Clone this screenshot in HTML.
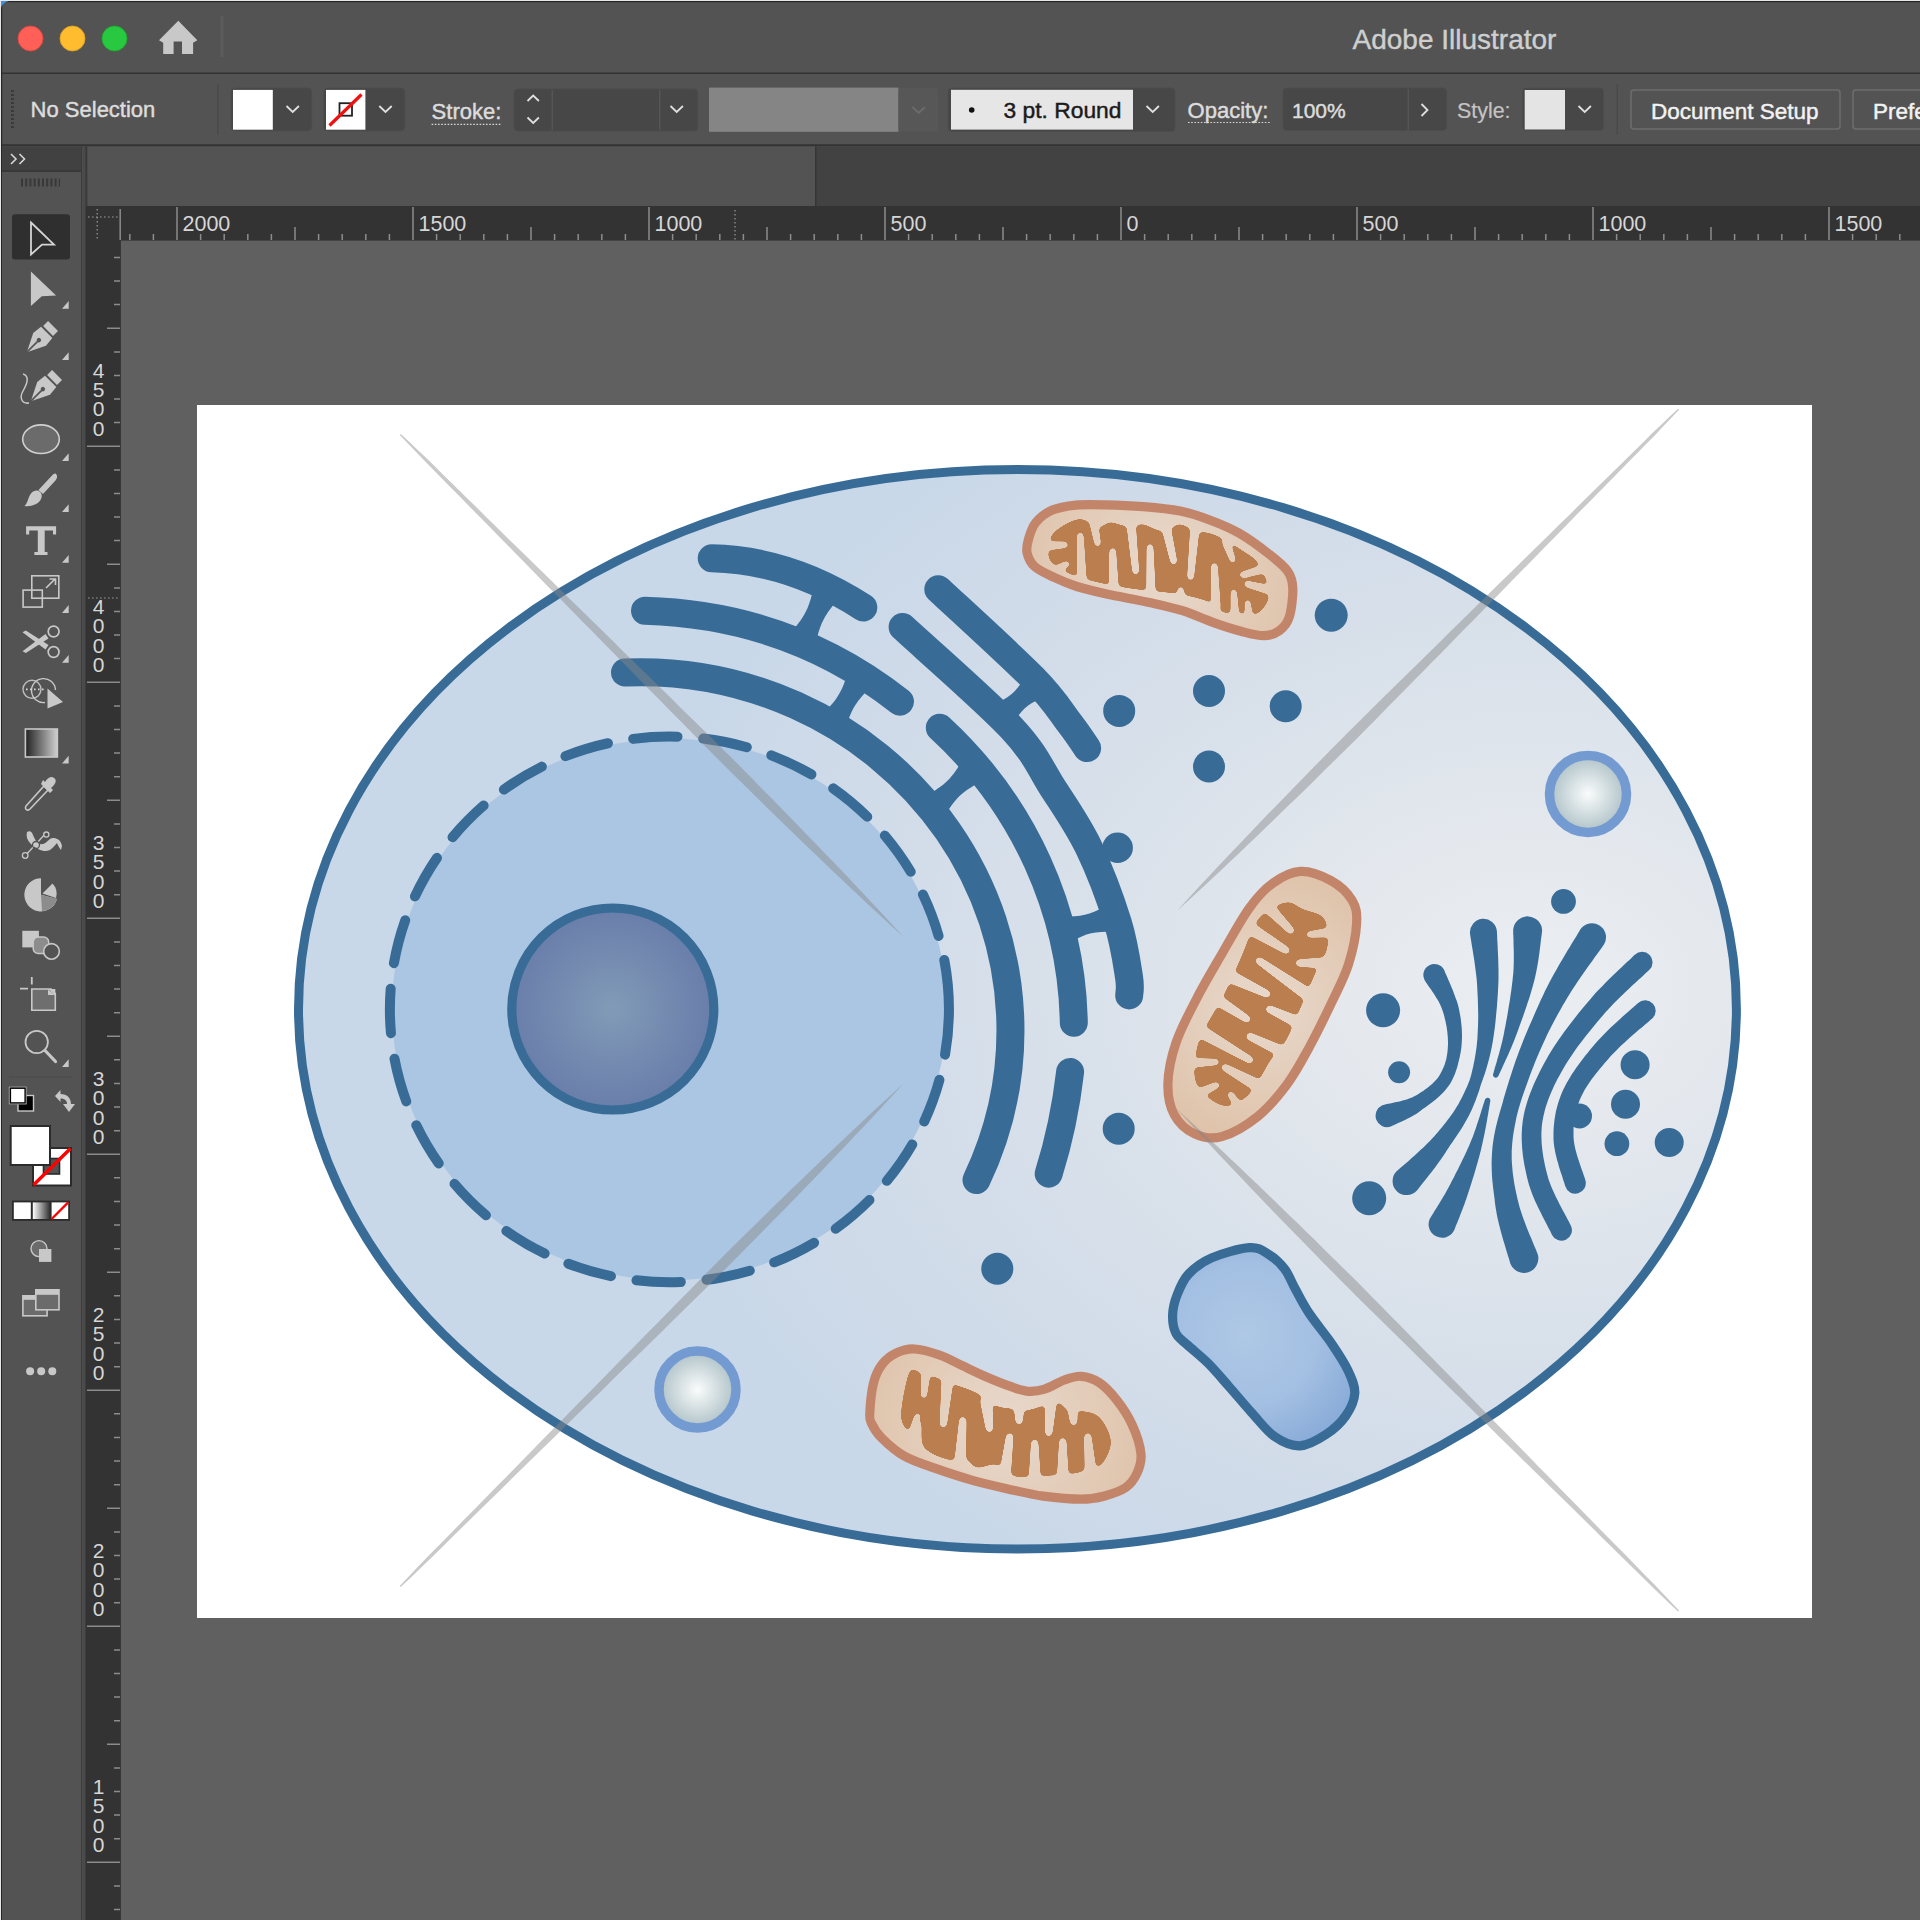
<!DOCTYPE html>
<html><head><meta charset="utf-8">
<style>
*{margin:0;padding:0}
html,body{width:1920px;height:1920px;overflow:hidden;background:#606060}
svg{position:absolute;left:0;top:0;display:block}
text{font-family:"Liberation Sans",sans-serif}
.ui{font-size:22px;fill:#dcdcdc;stroke:#dcdcdc;stroke-width:0.45px}
.dk{fill:#1a1a1a;stroke:#1a1a1a;font-size:22.8px}
.lt{fill:#c4c4c4;stroke:#c4c4c4;stroke-width:0.2px;font-size:21.4px}
.wt{fill:#f2f2f2;stroke:#f2f2f2}
.ttl{font-size:28px;fill:#cfcfcf;stroke:#cfcfcf;stroke-width:0.4px}
.rl{font-size:21.5px;fill:#d6d6d6}
.rv{font-size:21px;fill:#d6d6d6;text-anchor:middle}
</style></head><body>
<svg width="1920" height="1920" viewBox="0 0 1920 1920">
<!-- window backgrounds -->
<rect x="0" y="0" width="1920" height="1920" fill="#606060"/>
<rect x="0" y="0" width="1920" height="146" fill="#535353"/>
<rect x="0" y="0" width="1920" height="1.5" fill="#e6e6e6"/>
<rect x="0" y="0" width="1.5" height="1920" fill="#e6e6e6"/>
<rect x="1" y="1" width="1919" height="1.2" fill="#262626"/>
<rect x="1" y="1" width="1.2" height="1919" fill="#262626"/>
<path d="M1,1 H9 Q2.5,2.5 1,8 Z" fill="#3d8fe8"/>
<rect x="2" y="72.5" width="1918" height="1.5" fill="#333"/>
<rect x="2" y="144.3" width="1918" height="2.2" fill="#333"/>
<!-- traffic lights -->
<circle cx="30.5" cy="38.5" r="12.5" fill="#fe5f57" stroke="#e0443e" stroke-width="0.8"/>
<circle cx="72.5" cy="38.5" r="12.5" fill="#febc2e" stroke="#dea123" stroke-width="0.8"/>
<circle cx="114.5" cy="38.5" r="12.5" fill="#28c840" stroke="#1aab29" stroke-width="0.8"/>
<!-- home -->
<path d="M178.3,20.7 L197.3,40.2 L193.1,42.8 V54 H182 V41.5 H173.6 V54 H163.2 V42.8 L159,40.2 Z" fill="#c8c8c8"/>
<rect x="220.5" y="16" width="3" height="41" fill="#5c5c5c"/>
<text x="1352.5" y="48.5" class="ttl">Adobe Illustrator</text>
<!-- control bar -->
<path d="M12.5,90V130" stroke="#3a3a3a" stroke-width="3" stroke-dasharray="2,2"/>
<text x="30.6" y="116.6" class="ui">No Selection</text>
<rect x="217" y="84" width="1.5" height="51" fill="#4a4a4a"/>
<rect x="231.2" y="88.1" width="80.5" height="42.7" rx="4" fill="#474747" stroke="#4c4c4c" stroke-width="1"/>
<rect x="233" y="89.9" width="39.8" height="39.8" fill="#ffffff"/>
<path d="M286.5,106 L292.7,112 L298.9,106" stroke="#e0e0e0" stroke-width="1.8" fill="none"/>
<rect x="323.8" y="88.1" width="80.9" height="42.7" rx="4" fill="#474747" stroke="#4c4c4c" stroke-width="1"/>
<rect x="326" y="89.9" width="39.4" height="39.8" fill="#ffffff"/>
<rect x="339.5" y="103.2" width="12.5" height="12.5" fill="none" stroke="#222" stroke-width="1.8"/>
<path d="M329.5,125.5 L361.5,94.5" stroke="#f01010" stroke-width="3.2"/>
<path d="M379.3,106 L385.5,112 L391.7,106" stroke="#e0e0e0" stroke-width="1.8" fill="none"/>
<text x="431.6" y="119.3" class="ui">Stroke:</text>
<path d="M431.6,124.3H501" stroke="#d8d8d8" stroke-width="1.2" stroke-dasharray="1.6,1.6"/>
<rect x="514" y="89" width="183.8" height="42" rx="4" fill="#474747" stroke="#4c4c4c" stroke-width="1"/>
<rect x="551.5" y="90" width="1.5" height="40" fill="#555"/>
<rect x="659" y="90" width="1.5" height="40" fill="#555"/>
<path d="M527.5,101 L533.2,95.5 L538.9,101 M527.5,117.5 L533.2,123 L538.9,117.5" stroke="#e0e0e0" stroke-width="1.8" fill="none"/>
<path d="M670.5,106 L676.7,112 L682.9,106" stroke="#e0e0e0" stroke-width="1.8" fill="none"/>
<rect x="709" y="87.6" width="189.5" height="44.2" fill="#858585"/>
<rect x="898.5" y="87.6" width="39.5" height="44.2" rx="3" fill="#575757"/>
<path d="M912.5,107 L918.7,113 L924.9,107" stroke="#6c6c6c" stroke-width="1.8" fill="none"/>
<rect x="948" y="88" width="227" height="43.5" rx="4" fill="#474747" stroke="#4c4c4c" stroke-width="1"/>
<rect x="951" y="89.8" width="182" height="39.8" fill="#e6e6e6"/>
<circle cx="971.7" cy="110" r="2.8" fill="#111"/>
<text x="1003.6" y="118.2" class="ui dk">3 pt. Round</text>
<path d="M1146.5,106 L1152.7,112 L1158.9,106" stroke="#e0e0e0" stroke-width="1.8" fill="none"/>
<text x="1187.6" y="117.7" class="ui">Opacity:</text>
<path d="M1188,122.5H1270" stroke="#d8d8d8" stroke-width="1.2" stroke-dasharray="1.6,1.6"/>
<rect x="1283" y="88" width="163.6" height="42.5" rx="4" fill="#474747" stroke="#4c4c4c" stroke-width="1"/>
<rect x="1407.5" y="89" width="1.5" height="41" fill="#555"/>
<path d="M1421.5,104 L1427.5,110 L1421.5,116" stroke="#e0e0e0" stroke-width="1.8" fill="none"/>
<text x="1292" y="117.7" class="ui" style="font-size:21px">100%</text>
<text x="1457" y="118" class="ui lt">Style:</text>
<rect x="1522.5" y="88" width="81" height="42.5" rx="4" fill="#474747" stroke="#4c4c4c" stroke-width="1"/>
<rect x="1524.7" y="90" width="40.3" height="39.5" fill="#e4e4e4"/>
<path d="M1578.5,106 L1584.7,112 L1590.9,106" stroke="#e0e0e0" stroke-width="1.8" fill="none"/>
<rect x="1616.5" y="84" width="1.5" height="51" fill="#4a4a4a"/>
<rect x="1631" y="90" width="209" height="39" rx="3" fill="#535353" stroke="#6e6e6e" stroke-width="1.5"/>
<text x="1651" y="118.8" class="ui wt" style="font-size:22.5px">Document Setup</text>
<rect x="1853" y="90" width="80" height="39" rx="3" fill="#535353" stroke="#6e6e6e" stroke-width="1.5"/>
<text x="1873" y="118.8" class="ui wt" style="font-size:22.5px">Prefe</text>
<!-- tab strip -->
<rect x="85" y="146.5" width="1835" height="59.5" fill="#424242"/>
<rect x="87.5" y="146.5" width="727.5" height="59.5" fill="#535353"/>
<rect x="815" y="146.5" width="1.5" height="59.5" fill="#353535"/>
<!-- rulers -->
<rect x="85" y="206" width="1835" height="34.6" fill="#333333"/>
<rect x="85" y="206" width="35.9" height="1714" fill="#333333"/>
<path d="M97.2,209V240" stroke="#9a9a9a" stroke-width="1.2" stroke-dasharray="1.6,2.4"/>
<path d="M88,217H120" stroke="#9a9a9a" stroke-width="1.2" stroke-dasharray="1.6,2.4"/>
<path d="M120.2,209V240" stroke="#8c8c8c" stroke-width="1.5"/>
<path d="M735,210V240" stroke="#9a9a9a" stroke-width="1.2" stroke-dasharray="1.6,2.4"/>
<path d="M88,598H118" stroke="#9a9a9a" stroke-width="1.2" stroke-dasharray="1.6,2.4"/>

<path d="M129.8,234V240M153.4,234V240M177.0,207V240M200.6,234V240M224.2,234V240M247.8,234V240M271.4,234V240M295.0,227V240M318.6,234V240M342.2,234V240M365.8,234V240M389.4,234V240M413.0,207V240M436.6,234V240M460.2,234V240M483.8,234V240M507.4,234V240M531.0,227V240M554.6,234V240M578.2,234V240M601.8,234V240M625.4,234V240M649.0,207V240M672.6,234V240M696.2,234V240M719.8,234V240M743.4,234V240M767.0,227V240M790.6,234V240M814.2,234V240M837.8,234V240M861.4,234V240M885.0,207V240M908.6,234V240M932.2,234V240M955.8,234V240M979.4,234V240M1003.0,227V240M1026.6,234V240M1050.2,234V240M1073.8,234V240M1097.4,234V240M1121.0,207V240M1144.6,234V240M1168.2,234V240M1191.8,234V240M1215.4,234V240M1239.0,227V240M1262.6,234V240M1286.2,234V240M1309.8,234V240M1333.4,234V240M1357.0,207V240M1380.6,234V240M1404.2,234V240M1427.8,234V240M1451.4,234V240M1475.0,227V240M1498.6,234V240M1522.2,234V240M1545.8,234V240M1569.4,234V240M1593.0,207V240M1616.6,234V240M1640.2,234V240M1663.8,234V240M1687.4,234V240M1711.0,227V240M1734.6,234V240M1758.2,234V240M1781.8,234V240M1805.4,234V240M1829.0,207V240M1852.6,234V240M1876.2,234V240M1899.8,234V240M1923.4,234V240" stroke="#8c8c8c" stroke-width="1.5"/>
<text x="182.5" y="231" class="rl">2000</text>
<text x="418.5" y="231" class="rl">1500</text>
<text x="654.5" y="231" class="rl">1000</text>
<text x="890.5" y="231" class="rl">500</text>
<text x="1126.5" y="231" class="rl">0</text>
<text x="1362.5" y="231" class="rl">500</text>
<text x="1598.5" y="231" class="rl">1000</text>
<text x="1834.5" y="231" class="rl">1500</text>
<path d="M114,257.4H120M114,281.0H120M114,304.6H120M107,328.2H120M114,351.9H120M114,375.4H120M114,399.1H120M114,422.6H120M87,446.2H120M114,469.9H120M114,493.4H120M114,517.0H120M114,540.6H120M107,564.2H120M114,587.9H120M114,611.5H120M114,635.0H120M114,658.6H120M87,682.2H120M114,705.9H120M114,729.5H120M114,753.0H120M114,776.7H120M107,800.2H120M114,823.9H120M114,847.5H120M114,871.0H120M114,894.7H120M87,918.2H120M114,941.9H120M114,965.5H120M114,989.1H120M114,1012.7H120M107,1036.2H120M114,1059.8H120M114,1083.5H120M114,1107.1H120M114,1130.7H120M87,1154.2H120M114,1177.8H120M114,1201.5H120M114,1225.1H120M114,1248.7H120M107,1272.2H120M114,1295.8H120M114,1319.5H120M114,1343.1H120M114,1366.7H120M87,1390.2H120M114,1413.8H120M114,1437.5H120M114,1461.1H120M114,1484.7H120M107,1508.2H120M114,1531.9H120M114,1555.5H120M114,1579.1H120M114,1602.7H120M87,1626.2H120M114,1649.9H120M114,1673.5H120M114,1697.1H120M114,1720.7H120M107,1744.2H120M114,1767.9H120M114,1791.5H120M114,1815.1H120M114,1838.7H120M87,1862.2H120M114,1885.9H120M114,1909.5H120" stroke="#8c8c8c" stroke-width="1.5"/>
<text x="98.5" y="378.2" class="rv">4</text>
<text x="98.5" y="397.4" class="rv">5</text>
<text x="98.5" y="416.4" class="rv">0</text>
<text x="98.5" y="435.6" class="rv">0</text>
<text x="98.5" y="614.2" class="rv">4</text>
<text x="98.5" y="633.4" class="rv">0</text>
<text x="98.5" y="652.5" class="rv">0</text>
<text x="98.5" y="671.5" class="rv">0</text>
<text x="98.5" y="850.2" class="rv">3</text>
<text x="98.5" y="869.4" class="rv">5</text>
<text x="98.5" y="888.5" class="rv">0</text>
<text x="98.5" y="907.5" class="rv">0</text>
<text x="98.5" y="1086.2" class="rv">3</text>
<text x="98.5" y="1105.3" class="rv">0</text>
<text x="98.5" y="1124.5" class="rv">0</text>
<text x="98.5" y="1143.5" class="rv">0</text>
<text x="98.5" y="1322.2" class="rv">2</text>
<text x="98.5" y="1341.3" class="rv">5</text>
<text x="98.5" y="1360.5" class="rv">0</text>
<text x="98.5" y="1379.5" class="rv">0</text>
<text x="98.5" y="1558.2" class="rv">2</text>
<text x="98.5" y="1577.3" class="rv">0</text>
<text x="98.5" y="1596.5" class="rv">0</text>
<text x="98.5" y="1615.5" class="rv">0</text>
<text x="98.5" y="1794.2" class="rv">1</text>
<text x="98.5" y="1813.3" class="rv">5</text>
<text x="98.5" y="1832.5" class="rv">0</text>
<text x="98.5" y="1851.5" class="rv">0</text>
<!-- toolbar panel -->
<rect x="2" y="146.5" width="80" height="1774" fill="#535353"/>
<rect x="2" y="146.5" width="80" height="23.5" fill="#414141"/>
<rect x="2" y="170" width="80" height="2" fill="#393939"/>
<rect x="81" y="146.5" width="1.5" height="1774" fill="#3c3c3c"/>
<rect x="82.5" y="146.5" width="3" height="1774" fill="#4a4a4a"/>
<rect x="85.5" y="146.5" width="1.5" height="60" fill="#3a3a3a"/>
<path d="M11,154 L16,159 L11,164 M19.5,154 L24.5,159 L19.5,164" stroke="#d6d6d6" stroke-width="1.6" fill="none"/>
<path d="M21,182.5H60" stroke="#383838" stroke-width="8" stroke-dasharray="2,2.2"/>
<!-- selection tool -->
<rect x="12" y="214.3" width="58" height="45.3" rx="3" fill="#2f2f2f"/>
<path d="M31,222.5 L54,244.7 L42,244.7 L31,254.5 Z" fill="none" stroke="#d4d4d4" stroke-width="1.8" stroke-linejoin="miter"/>
<!-- direct selection -->
<path d="M30.9,271.6 L56.1,295.6 L41.8,296.3 L30.9,306 Z" fill="#c8c8c8"/>
<g fill="#c8c8c8">
<path d="M62,308.8 L68.7,301 V308.8 Z"/>
<path d="M62,360 L68.7,352.2 V360 Z"/>
<path d="M62,461 L68.7,453.2 V461 Z"/>
<path d="M62,512 L68.7,504.2 V512 Z"/>
<path d="M62,562.7 L68.7,554.9 V562.7 Z"/>
<path d="M62,612.9 L68.7,605.1 V612.9 Z"/>
<path d="M62,662.8 L68.7,655 V662.8 Z"/>
<path d="M62,763.5 L68.7,755.7 V763.5 Z"/>
<path d="M62,1067 L68.7,1059.2 V1067 Z"/>
</g>
<!-- pen -->
<g transform="translate(41,338) rotate(45)">
<path d="M-8,-8 L8,-8 L9,2 L0,20 L-9,2 Z" fill="#c8c8c8"/>
<rect x="-7" y="-17" width="14" height="7" fill="#c8c8c8"/>
<path d="M0,20 V4" stroke="#535353" stroke-width="1.6"/>
<circle cx="0" cy="3" r="2.2" fill="#535353"/>
</g>
<!-- curvature pen -->
<g transform="translate(45,387) rotate(45)">
<path d="M-8,-8 L8,-8 L9,2 L0,20 L-9,2 Z" fill="#c8c8c8"/>
<rect x="-7" y="-17" width="14" height="7" fill="#c8c8c8"/>
<path d="M0,20 V4" stroke="#535353" stroke-width="1.6"/>
<circle cx="0" cy="3" r="2.2" fill="#535353"/>
</g>
<path d="M23,374 C30,376 27,384 23,391 C19,398 22,404 29,403" fill="none" stroke="#c8c8c8" stroke-width="1.5"/>
<!-- ellipse -->
<ellipse cx="41" cy="439.2" rx="18.3" ry="14.3" fill="#6b6b6b" stroke="#d0d0d0" stroke-width="1.6"/>
<!-- paintbrush -->
<path d="M56,474 C58,476 57,479 55,481 L43,494 L38.5,490 L52,475.5 C53.5,474 55,473 56,474 Z" fill="#c8c8c8"/>
<path d="M37,490.5 C41,491 43,495 41,499 C39,504 31,507 24.5,506 C28,503 28,497 31,493.5 C33,491 35,490.3 37,490.5 Z" fill="#c8c8c8"/>
<!-- type -->
<path d="M26.1,526.3 H56.1 V534.5 H53 V530.5 H44.7 V552 H47.5 V555 H34.4 V552 H37.8 V530.5 H29.2 V534.5 H26.1 Z" fill="#c8c8c8"/>
<!-- scale -->
<rect x="31.8" y="575.8" width="27" height="22.4" fill="none" stroke="#c8c8c8" stroke-width="1.6"/>
<rect x="23.1" y="590.1" width="19.2" height="17" fill="none" stroke="#c8c8c8" stroke-width="1.6"/>
<path d="M46,588 L55,579 M49.5,579 H55.5 V585" stroke="#c8c8c8" stroke-width="1.6" fill="none"/>
<!-- scissors -->
<path d="M22.5,632.2 L25.8,630.6 L48.5,645 L45.5,649.5 Z" fill="#c8c8c8"/><path d="M22.5,651.3 L25.8,652.9 L48.5,638.5 L45.5,634 Z" fill="#c8c8c8"/>
<circle cx="53.6" cy="631.5" r="5.4" fill="none" stroke="#c8c8c8" stroke-width="1.7"/>
<circle cx="53.6" cy="652" r="5.4" fill="none" stroke="#c8c8c8" stroke-width="1.7"/>
<!-- shape builder -->
<circle cx="32" cy="689.3" r="9" fill="none" stroke="#bdbdbd" stroke-width="1.4"/>
<path d="M45,702.5 A12,12 0 1 1 55.5,690" fill="none" stroke="#c8c8c8" stroke-width="1.4"/>
<path d="M26,689.3 H46" stroke="#d8d8d8" stroke-width="1.8" stroke-dasharray="1.6,2.4"/>
<path d="M47.5,688.5 L63,702 L47.5,708.5 Z" fill="#c8c8c8"/>
<!-- gradient -->
<defs><linearGradient id="gtool" x1="0" x2="1"><stop offset="0" stop-color="#222"/><stop offset="1" stop-color="#d0d0d0"/></linearGradient>
<linearGradient id="gmode" x1="0" x2="1"><stop offset="0" stop-color="#fff"/><stop offset="1" stop-color="#333"/></linearGradient></defs>
<rect x="25.4" y="729" width="32" height="28" fill="url(#gtool)" stroke="#c8c8c8" stroke-width="1.6"/>
<!-- eyedropper -->
<path d="M26,806 L44,786 L48,790 L30,809 C28,811 24,810 26,806 Z" fill="none" stroke="#c8c8c8" stroke-width="1.6"/>
<path d="M41,784 L50,793 L53,790 L51,788 C56,784 57,780 54,778 C52,776 48,777 45,782 L43,780 Z" fill="#c8c8c8"/>
<!-- puppet warp -->
<path d="M27,832 C26,836 27,840 30,843 C33,846 38,850 44,851 C51,852 54,846 57,843 C58,845 59,848 61,850 L62,846 C61,840 57,838 53,838 C49,838 47,843 43,844 C38,845 35,840 33,835 C32,832 30,830 27,832 Z" fill="#c8c8c8"/>
<path d="M25,856 L46,833" stroke="#c8c8c8" stroke-width="1.3"/>
<circle cx="25.2" cy="855.5" r="2.8" fill="#535353" stroke="#c8c8c8" stroke-width="1.3"/>
<circle cx="46.3" cy="834.6" r="2.6" fill="#535353" stroke="#c8c8c8" stroke-width="1.3"/>
<circle cx="36" cy="845" r="3.5" fill="none" stroke="#535353" stroke-width="1.3"/>
<!-- pie -->
<path d="M41,878.2 A16.6,16.6 0 1 0 57,899 L41,894.7 Z" fill="#c8c8c8"/>
<path d="M41,894.7 L57,899 A16.6,16.6 0 0 1 42,911.3 Z" fill="#8c8c8c"/>
<path d="M42.5,893.5 L52.5,883.5 A15,15 0 0 1 56,898 Z" fill="#c8c8c8"/>
<!-- live paint -->
<rect x="22.3" y="930.8" width="16.6" height="16.6" fill="#c8c8c8"/>
<rect x="33.2" y="937" width="15.5" height="16.5" rx="5" fill="#8c8c8c" stroke="#c8c8c8" stroke-width="1.5"/>
<circle cx="51.5" cy="951.4" r="7.8" fill="#535353" stroke="#c8c8c8" stroke-width="1.6"/>
<!-- artboard -->
<path d="M31.8,977V984.6 M20,988.6H28" stroke="#c8c8c8" stroke-width="1.8"/>
<path d="M31.8,989 H51 L55.3,993.5 V1010.2 H31.8 Z" fill="#6e6e6e" stroke="#c8c8c8" stroke-width="1.6"/>
<path d="M48,989.5 V995 H55" fill="#c8c8c8"/>
<path d="M48.5,989 L55.3,995.8 V989 Z" fill="#c8c8c8"/>
<!-- zoom -->
<circle cx="36.7" cy="1042" r="11.2" fill="none" stroke="#c8c8c8" stroke-width="1.8"/>
<path d="M45,1050.5 L55.5,1061.5" stroke="#c8c8c8" stroke-width="3.2" stroke-linecap="round"/>
<rect x="9" y="1076.5" width="64" height="1" fill="#4b4b4b"/>
<!-- default colors -->
<rect x="18" y="1095.5" width="15.5" height="15.5" fill="#000" stroke="#c8c8c8" stroke-width="1.4"/>
<rect x="10" y="1087.8" width="15.5" height="15.5" fill="#fff" stroke="#000" stroke-width="2.2"/>
<rect x="9.2" y="1087" width="17" height="17" fill="none" stroke="#c8c8c8" stroke-width="0.8"/>
<!-- swap arrow -->
<path d="M55,1096 L60.5,1090 V1094 C67,1094 71,1098 71,1104 H75 L69,1112 L63,1104 H67 C67,1100 64,1098.5 60.5,1098.5 V1102 Z" fill="#c8c8c8"/>
<!-- fill / stroke big swatches -->
<rect x="32" y="1147" width="40" height="39.5" fill="#2b2b2b"/>
<rect x="34" y="1149" width="36" height="35.5" fill="#fff"/>
<rect x="43.5" y="1158.5" width="16" height="15.5" fill="#535353" stroke="#2b2b2b" stroke-width="1.6"/>
<path d="M33.5,1185 L70.5,1148.5" stroke="#ff0000" stroke-width="3.4"/>
<rect x="9.7" y="1125" width="41.3" height="41" fill="#2b2b2b"/>
<rect x="11.7" y="1127" width="37.3" height="37" fill="#fff"/>
<!-- mode row -->
<rect x="12" y="1200.6" width="58" height="20.2" fill="#2b2b2b"/>
<rect x="13.8" y="1202.4" width="17" height="16.6" fill="#fff"/>
<rect x="32.8" y="1202.4" width="17" height="16.6" fill="url(#gmode)"/>
<rect x="51.6" y="1202.4" width="16.6" height="16.6" fill="#fff"/>
<path d="M51.6,1219 L68.2,1202.4" stroke="#ff0000" stroke-width="2.4"/>
<!-- draw mode -->
<circle cx="39" cy="1248.6" r="8" fill="#6b6b6b" stroke="#c8c8c8" stroke-width="1.4"/>
<rect x="39" y="1249" width="12.4" height="12.9" fill="#c8c8c8"/>
<!-- screen mode -->
<rect x="22.9" y="1295.8" width="24.2" height="20" fill="#6b6b6b" stroke="#c8c8c8" stroke-width="1.6"/>
<rect x="22.9" y="1295.8" width="24.2" height="4" fill="#c8c8c8"/>
<rect x="35.8" y="1289.8" width="23.2" height="20" fill="#6b6b6b" stroke="#c8c8c8" stroke-width="1.6"/>
<rect x="35.8" y="1289.8" width="23.2" height="5" fill="#c8c8c8"/>
<circle cx="30.1" cy="1371.3" r="4" fill="#c8c8c8"/>
<circle cx="41.2" cy="1371.3" r="4" fill="#c8c8c8"/>
<circle cx="52.3" cy="1371.3" r="4" fill="#c8c8c8"/>

<rect x="197" y="405" width="1615" height="1213" fill="#ffffff"/>
<defs>
<radialGradient id="gcell" gradientUnits="userSpaceOnUse" cx="1532" cy="990" r="900" gradientTransform="translate(1532,990) scale(1,0.755) translate(-1532,-990)">
<stop offset="0" stop-color="#ebeef1"/><stop offset="0.2" stop-color="#e5e9ee"/><stop offset="0.5" stop-color="#d9e1ea"/><stop offset="0.8" stop-color="#d0dbe9"/><stop offset="1" stop-color="#c9d8e8"/></radialGradient>
<radialGradient id="gnucleolus" gradientUnits="userSpaceOnUse" cx="612" cy="1009" r="102">
<stop offset="0" stop-color="#819bb7"/><stop offset="1" stop-color="#697daa"/></radialGradient>
<radialGradient id="gvac" gradientUnits="userSpaceOnUse" cx="1246" cy="1335" r="120">
<stop offset="0" stop-color="#aec8e5"/><stop offset="0.6" stop-color="#a3bfe2"/><stop offset="1" stop-color="#8badd9"/></radialGradient>
<radialGradient id="gves1" gradientUnits="userSpaceOnUse" cx="1588" cy="794" r="36">
<stop offset="0" stop-color="#fafcfc"/><stop offset="1" stop-color="#b3c5ca"/></radialGradient>
<radialGradient id="gves2" gradientUnits="userSpaceOnUse" cx="697.5" cy="1389.5" r="36">
<stop offset="0" stop-color="#fafcfc"/><stop offset="1" stop-color="#b3c5ca"/></radialGradient>
<radialGradient id="gmito1" gradientUnits="userSpaceOnUse" cx="1160" cy="570" r="150">
<stop offset="0" stop-color="#e8d9cd"/><stop offset="1" stop-color="#dfc3aa"/></radialGradient>
<radialGradient id="gmito2" gradientUnits="userSpaceOnUse" cx="1262" cy="1005" r="140">
<stop offset="0" stop-color="#e8d9cd"/><stop offset="1" stop-color="#dfc3aa"/></radialGradient>
<radialGradient id="gmito3" gradientUnits="userSpaceOnUse" cx="1005" cy="1425" r="150">
<stop offset="0" stop-color="#e8d9cd"/><stop offset="1" stop-color="#dfc3aa"/></radialGradient>
</defs>
<ellipse cx="1017.45" cy="1009.25" rx="718.95" ry="539.75" fill="url(#gcell)" stroke="#386c97" stroke-width="9"/>
<ellipse cx="669.4" cy="1009.4" rx="277.5" ry="270.8" fill="#abc6e2"/>
<path d="M944.3,960A279.5,272.8 0 0 1 394.5,1058.8A279.5,272.8 0 0 1 944.3,960" fill="none" stroke="#386c97" stroke-width="10" stroke-linecap="round" stroke-dasharray="95.2,25.8,44.4,25.8,44.4,25.8,44.4,25.8,44.4,25.8,44.4,25.8,44.4,25.8,44.4,25.8,44.4,25.8,44.4,25.8,44.4,25.8,44.4,25.8,44.4,25.8,44.4,25.8,44.4,25.8,44.4,25.8,44.4,25.8,44.4,25.8,44.4,25.8,44.4,25.8,44.4,25.8,44.4,25.8,44.4,25.8,44.4,25.8"/>
<circle cx="612.8" cy="1009" r="101" fill="url(#gnucleolus)" stroke="#386c97" stroke-width="9.2"/>
<path d="M711.7,558.3 Q790,560 863.3,607.5" fill="none" stroke="#386c97" stroke-width="28" stroke-linecap="round"/>
<path d="M645,610.8 Q790,615 900,701.7" fill="none" stroke="#386c97" stroke-width="28" stroke-linecap="round"/>
<path d="M625,672.5 A370,358 0 0 1 976.5,1180" fill="none" stroke="#386c97" stroke-width="28" stroke-linecap="round"/>
<path d="M939.8,727.7 A434,418 0 0 1 1073.8,1022.7" fill="none" stroke="#386c97" stroke-width="28" stroke-linecap="round"/>
<path d="M902.6,627.1C920.7,643.9 986.1,700.7 1011.3,727.7C1036.5,754.7 1040.5,769 1053.5,789C1066.5,809 1078.3,825.8 1089,848C1099.7,870.2 1110.9,900.5 1117.6,922C1124.3,943.5 1127.1,964.8 1129,977C1130.9,989.2 1129.2,992.3 1129.2,995.4" fill="none" stroke="#386c97" stroke-width="28" stroke-linecap="round"/>
<path d="M938.3,589.2C954.1,604 1011.2,655.8 1033.1,678.1C1055,700.5 1060.6,711.6 1069.6,723.3C1078.6,735 1084.2,744 1087.1,748.1" fill="none" stroke="#386c97" stroke-width="28" stroke-linecap="round"/>
<path d="M1070.1,1072 Q1064,1125 1048.7,1173.6" fill="none" stroke="#386c97" stroke-width="28" stroke-linecap="round"/>
<path d="M814.5,582.4C809.6,608 805.3,616.6 787.9,635.9L814.7,649.3C819.6,623.7 823.9,615.1 841.3,595.8Z" fill="#386c97"/>
<path d="M849,668.1C842.2,692.6 837.3,700.6 818.6,717.8L844.2,733.4C851,708.9 855.9,700.9 874.6,683.7Z" fill="#386c97"/>
<path d="M963.6,758.3C951,779.9 944.3,786.2 922.1,797.6L942.7,819.4C955.3,797.8 962,791.5 984.2,780.1Z" fill="#386c97"/>
<path d="M1026.8,673.4C1016.3,692.2 1010.5,697.4 990.6,705.8L1010.6,728.2C1021.1,709.4 1026.9,704.2 1046.8,695.8Z" fill="#386c97"/>
<path d="M1110.4,903C1090.2,915.3 1081.9,917.4 1058.4,916L1065.6,945.2C1085.8,932.9 1094.1,930.8 1117.6,932.2Z" fill="#386c97"/>
<circle cx="1117.6" cy="847.8" r="15.3" fill="#386c97"/>
<circle cx="1119.2" cy="710.9" r="16" fill="#386c97"/>
<circle cx="1118.7" cy="1128.8" r="16" fill="#386c97"/>
<circle cx="1331.2" cy="615.2" r="16.5" fill="#386c97"/>
<circle cx="1209" cy="691" r="16" fill="#386c97"/>
<circle cx="1285.7" cy="706.2" r="16" fill="#386c97"/>
<circle cx="1209" cy="766.5" r="16" fill="#386c97"/>
<circle cx="997.3" cy="1268.8" r="16" fill="#386c97"/>
<path d="M1172.6,1315.2C1172.8,1308.7 1174.5,1301.4 1177.2,1294.6C1179.9,1287.7 1182.9,1280.1 1188.6,1274C1194.4,1267.8 1201.4,1262.3 1211.6,1257.9C1221.7,1253.5 1239.8,1248.2 1249.4,1247.6C1258.9,1247 1262.9,1250.8 1268.8,1254.5C1274.8,1258.1 1280.5,1263.6 1284.9,1269.4C1289.3,1275.1 1291.2,1281.6 1295.2,1288.8C1299.2,1296.1 1302.8,1303.7 1308.9,1312.9C1315,1322.1 1325.3,1334.3 1331.8,1343.8C1338.3,1353.4 1344.1,1362 1347.9,1370.2C1351.7,1378.4 1355.1,1385.5 1354.8,1393.1C1354.4,1400.7 1350.4,1409.1 1345.6,1416C1340.8,1422.9 1333.8,1429.4 1326.1,1434.3C1318.5,1439.3 1308.4,1445.4 1299.8,1445.8C1291.2,1446.2 1282.6,1442.2 1274.6,1436.6C1266.5,1431.1 1259.3,1421 1251.6,1412.6C1244,1404.2 1236,1394.4 1228.7,1386.2C1221.5,1378 1215,1370.2 1208.1,1363.3C1201.2,1356.4 1192.8,1349.9 1187.5,1345C1182.1,1340 1178.5,1338.5 1176,1333.5C1173.6,1328.6 1172.4,1321.7 1172.6,1315.2Z" fill="url(#gvac)" stroke="#386c97" stroke-width="9.2"/>
<circle cx="1588" cy="794" r="38.5" fill="url(#gves1)" stroke="#739bd2" stroke-width="9.5"/>
<circle cx="697.5" cy="1389.5" r="38.5" fill="url(#gves2)" stroke="#739bd2" stroke-width="9.5"/>
<filter id="goo" x="-20%" y="-20%" width="140%" height="140%" color-interpolation-filters="sRGB"><feGaussianBlur in="SourceGraphic" stdDeviation="2.2"/><feColorMatrix values="0 0 0 0 0.733  0 0 0 0 0.498  0 0 0 0 0.31  0 0 0 14 -7"/></filter>
<path d="M1027,552.5C1026,547.7 1027.3,543.1 1028.8,538.1C1030.3,533.1 1032,527.1 1035.9,522.4C1039.8,517.7 1045.7,512.9 1052.3,510.1C1059,507.2 1067,506 1075.9,505.1C1084.7,504.3 1094.3,504.6 1105.5,504.9C1116.7,505.1 1130.5,505.6 1143,506.7C1155.4,507.7 1169.1,508.9 1180.2,511.1C1191.4,513.3 1199.9,516.3 1209.7,520C1219.6,523.7 1229.4,527.6 1239.3,533.3C1249.1,538.9 1260.9,547.7 1268.9,554C1277,560.3 1283.6,565.4 1287.6,571.1C1291.6,576.9 1292.6,580.7 1292.8,588.4C1293.1,596 1291.5,609.9 1289.3,616.9C1287.1,624 1283.8,627.4 1279.6,630.5C1275.4,633.7 1270.1,635.5 1264,635.7C1257.8,635.9 1251.2,634 1242.7,631.7C1234.2,629.5 1222.9,625.9 1212.9,622.3C1202.8,618.8 1192.7,613.9 1182.5,610.7C1172.4,607.5 1164.6,605.8 1151.9,603C1139.3,600.2 1119.1,596.7 1106.6,594C1094.1,591.2 1085.4,589.2 1076.8,586.5C1068.1,583.8 1061.7,581 1054.7,577.7C1047.7,574.4 1039.4,570.9 1034.8,566.7C1030.1,562.5 1028,557.2 1027,552.5Z" fill="url(#gmito1)"/>
<mask id="m_gmito1" maskUnits="userSpaceOnUse" x="0" y="0" width="1920" height="1920"><rect x="0" y="0" width="1920" height="1920" fill="#fff"/>
<path d="M1088.8,519.8L1094.8,544.6A3.1,3.1 0 0 0 1100.8,543.4L1097.2,518.2A4.2,4.2 0 0 0 1088.8,519.8Z" fill="#000"/>
<path d="M1126.5,523.4L1132.5,571.8A3.2,3.2 0 0 0 1138.9,571.2L1135.5,522.6A4.5,4.5 0 0 0 1126.5,523.4Z" fill="#000"/>
<path d="M1161.6,528L1170.6,562.2A3.2,3.2 0 0 0 1176.9,560.8L1170.4,526A4.5,4.5 0 0 0 1161.6,528Z" fill="#000"/>
<path d="M1190.5,526.6L1187.4,576.7A3.2,3.2 0 0 0 1193.8,577.3L1199.5,527.4A4.5,4.5 0 0 0 1190.5,526.6Z" fill="#000"/>
<path d="M1086.5,580.8L1083.4,535.4A3.2,3.2 0 0 0 1077,535.6L1077.5,581.2A4.5,4.5 0 0 0 1086.5,580.8Z" fill="#000"/>
<path d="M1118.5,587.8L1115.9,550.9A3.2,3.2 0 0 0 1109.5,551.1L1109.5,588.2A4.5,4.5 0 0 0 1118.5,587.8Z" fill="#000"/>
<path d="M1155.5,593.9L1153.2,546.9A3.2,3.2 0 0 0 1146.8,547.1L1146.5,594.1A4.5,4.5 0 0 0 1155.5,593.9Z" fill="#000"/>
<path d="M1220.5,606.8L1217.6,565.9A3.2,3.2 0 0 0 1211.2,566.1L1211.5,607.2A4.5,4.5 0 0 0 1220.5,606.8Z" fill="#000"/>
<path d="M1239.2,616.8L1236.7,591.4A3,3 0 0 0 1230.8,591.6L1230.8,617.2A4.2,4.2 0 0 0 1239.2,616.8Z" fill="#000"/>
<path d="M1253,617.6L1250.2,601.3A2.8,2.8 0 0 0 1244.8,601.7L1245,618.4A4,4 0 0 0 1253,617.6Z" fill="#000"/>
<path d="M1185,596.8L1183.3,588.4A2.8,2.8 0 0 0 1177.9,588.6L1177,597.2A4,4 0 0 0 1185,596.8Z" fill="#000"/>
<path d="M1046.3,550.5L1065.5,547.8A3,3 0 0 0 1065.1,541.8L1045.7,541.5A4.5,4.5 0 0 0 1046.3,550.5Z" fill="#000"/>
<path d="M1055.3,575.9L1068.2,566.6A3,3 0 0 0 1065.2,561.4L1050.7,568.1A4.5,4.5 0 0 0 1055.3,575.9Z" fill="#000"/>
<path d="M1222.3,543.4L1230.4,561.6A2.8,2.8 0 0 0 1235.6,559.6L1229.7,540.6A4,4 0 0 0 1222.3,543.4Z" fill="#000"/>
<path d="M1265.8,563.7L1241.7,572.1A3,3 0 0 0 1243.3,577.9L1268.2,572.3A4.5,4.5 0 0 0 1265.8,563.7Z" fill="#000"/>
<path d="M1271.1,585.6L1247.7,581.1A3,3 0 0 0 1246.1,586.9L1268.9,594.4A4.5,4.5 0 0 0 1271.1,585.6Z" fill="#000"/>
</mask>
<g filter="url(#goo)"><path d="M1048,550C1048.2,545.8 1048.7,540 1051,536C1053.3,532 1057.5,528.8 1062,526C1066.5,523.2 1073.3,519.7 1078,519C1082.7,518.3 1086.5,520.7 1090,522C1093.5,523.3 1095.7,527 1099,527C1102.3,527 1106.2,522.3 1110,522C1113.8,521.7 1118.3,524.3 1122,525C1125.7,525.7 1128.5,526.2 1132,526C1135.5,525.8 1138.7,523.3 1143,524C1147.3,524.7 1154,529 1158,530C1162,531 1163.5,531 1167,530C1170.5,529 1175.2,524.3 1179,524C1182.8,523.7 1187.2,526.8 1190,528C1192.8,529.2 1192.7,530.2 1196,531C1199.3,531.8 1205,531.5 1210,533C1215,534.5 1220.7,537.2 1226,540C1231.3,542.8 1237,546.7 1242,550C1247,553.3 1252.3,556 1256,560C1259.7,564 1261.8,569.3 1264,574C1266.2,578.7 1268.3,583.5 1269,588C1269.7,592.5 1269.5,597 1268,601C1266.5,605 1262.7,609.7 1260,612C1257.3,614.3 1255.3,614.7 1252,615C1248.7,615.3 1245,614.5 1240,614C1235,613.5 1227.7,614.2 1222,612C1216.3,609.8 1213.7,604 1206,601C1198.3,598 1187,595.8 1176,594C1165,592.2 1152,591.7 1140,590C1128,588.3 1114.5,586.2 1104,584C1093.5,581.8 1084.3,579.5 1077,577C1069.7,574.5 1064.5,571.7 1060,569C1055.5,566.3 1052,564.2 1050,561C1048,557.8 1047.8,554.2 1048,550Z" fill="#bb7f4f" mask="url(#m_gmito1)"/></g>
<path d="M1027,552.5C1026,547.7 1027.3,543.1 1028.8,538.1C1030.3,533.1 1032,527.1 1035.9,522.4C1039.8,517.7 1045.7,512.9 1052.3,510.1C1059,507.2 1067,506 1075.9,505.1C1084.7,504.3 1094.3,504.6 1105.5,504.9C1116.7,505.1 1130.5,505.6 1143,506.7C1155.4,507.7 1169.1,508.9 1180.2,511.1C1191.4,513.3 1199.9,516.3 1209.7,520C1219.6,523.7 1229.4,527.6 1239.3,533.3C1249.1,538.9 1260.9,547.7 1268.9,554C1277,560.3 1283.6,565.4 1287.6,571.1C1291.6,576.9 1292.6,580.7 1292.8,588.4C1293.1,596 1291.5,609.9 1289.3,616.9C1287.1,624 1283.8,627.4 1279.6,630.5C1275.4,633.7 1270.1,635.5 1264,635.7C1257.8,635.9 1251.2,634 1242.7,631.7C1234.2,629.5 1222.9,625.9 1212.9,622.3C1202.8,618.8 1192.7,613.9 1182.5,610.7C1172.4,607.5 1164.6,605.8 1151.9,603C1139.3,600.2 1119.1,596.7 1106.6,594C1094.1,591.2 1085.4,589.2 1076.8,586.5C1068.1,583.8 1061.7,581 1054.7,577.7C1047.7,574.4 1039.4,570.9 1034.8,566.7C1030.1,562.5 1028,557.2 1027,552.5Z" fill="none" stroke="#c3856a" stroke-width="9.2"/>
<path d="M1300.3,871.4C1310,870.9 1322.4,875.9 1331,880.6C1339.7,885.4 1347.7,893 1352,900.1C1356.3,907.2 1357.2,912.5 1356.6,923.2C1356.1,934 1352.6,951.3 1348.5,964.4C1344.4,977.4 1338.6,987.9 1332.1,1001.6C1325.6,1015.3 1317.1,1032.9 1309.6,1046.6C1302.1,1060.4 1295.9,1072.3 1287.3,1083.9C1278.7,1095.5 1268.8,1107.5 1257.9,1116.3C1247,1125 1232.3,1133.6 1221.8,1136.6C1211.3,1139.5 1202.6,1137.5 1194.7,1133.8C1186.7,1130.2 1178.6,1123 1174.2,1114.6C1169.7,1106.3 1167.6,1095.7 1167.9,1083.7C1168.2,1071.7 1171.2,1057 1176,1042.8C1180.8,1028.5 1189.1,1013 1196.9,998.1C1204.6,983.1 1213.7,968 1222.4,953C1231.2,938 1241,919.6 1249.4,908C1257.7,896.4 1264,889.5 1272.5,883.4C1281,877.3 1290.5,871.9 1300.3,871.4Z" fill="url(#gmito2)"/>
<mask id="m_gmito2" maskUnits="userSpaceOnUse" x="0" y="0" width="1920" height="1920"><rect x="0" y="0" width="1920" height="1920" fill="#fff"/>
<path d="M1261.7,909.2L1288.6,933.3A3.5,3.5 0 0 0 1293.6,928.5L1270.3,900.8A6,6 0 0 0 1261.7,909.2Z" fill="#000"/>
<path d="M1242.6,931.6L1284.7,953.4A3.5,3.5 0 0 0 1288.3,947.4L1249.4,920.4A6.5,6.5 0 0 0 1242.6,931.6Z" fill="#000"/>
<path d="M1333.5,927L1309.1,931.4A3,3 0 0 0 1309.7,937.4L1334.5,937A5,5 0 0 0 1333.5,927Z" fill="#000"/>
<path d="M1332,957L1299.1,959.5A3.5,3.5 0 0 0 1299.1,966.5L1332,969A6,6 0 0 0 1332,957Z" fill="#000"/>
<path d="M1313.7,990.7L1261,957.8A3.5,3.5 0 0 0 1257,963.6L1306.3,1001.3A6.5,6.5 0 0 0 1313.7,990.7Z" fill="#000"/>
<path d="M1222.2,979.9L1265.5,997.2A3.5,3.5 0 0 0 1268.5,990.8L1227.8,968.1A6.5,6.5 0 0 0 1222.2,979.9Z" fill="#000"/>
<path d="M1310.7,1021.1L1270.2,1005.6A3.5,3.5 0 0 0 1267.3,1011.9L1305.3,1032.9A6.5,6.5 0 0 0 1310.7,1021.1Z" fill="#000"/>
<path d="M1198.5,995.5L1245.6,1022.3A3.5,3.5 0 0 0 1249.4,1016.5L1205.5,984.5A6.5,6.5 0 0 0 1198.5,995.5Z" fill="#000"/>
<path d="M1298.7,1052.1L1250.9,1033.1A3.5,3.5 0 0 0 1247.9,1039.4L1293.3,1063.9A6.5,6.5 0 0 0 1298.7,1052.1Z" fill="#000"/>
<path d="M1196.7,1036.6L1248.2,1063A3.5,3.5 0 0 0 1251.8,1057L1203.3,1025.4A6.5,6.5 0 0 0 1196.7,1036.6Z" fill="#000"/>
<path d="M1265.2,1082.3L1226.7,1064.4A3.5,3.5 0 0 0 1223.3,1070.6L1258.8,1093.7A6.5,6.5 0 0 0 1265.2,1082.3Z" fill="#000"/>
<path d="M1188.2,1068L1216.4,1064.9A3,3 0 0 0 1216.1,1058.9L1187.8,1058A5,5 0 0 0 1188.2,1068Z" fill="#000"/>
<path d="M1200.1,1098.5L1218.2,1087.7A3,3 0 0 0 1215.6,1082.3L1195.9,1089.5A5,5 0 0 0 1200.1,1098.5Z" fill="#000"/>
<path d="M1244.7,1107.5L1233.1,1092.7A3,3 0 0 0 1228.1,1096.1L1237.3,1112.5A4.5,4.5 0 0 0 1244.7,1107.5Z" fill="#000"/>
</mask>
<g filter="url(#goo)"><path d="M1288.8,902C1294,902.2 1297.6,906.7 1303.1,909C1308.6,911.3 1317.8,912.5 1322,916C1326.2,919.5 1327.2,924.3 1328,930C1328.8,935.7 1328.7,943.7 1327,950C1325.3,956.3 1320.8,962.2 1318,968C1315.2,973.8 1313.7,977.7 1310.5,985C1307.3,992.3 1303.1,1002.7 1299,1012C1294.9,1021.3 1290.7,1033 1286,1041C1281.3,1049 1276.5,1051.8 1271,1060C1265.5,1068.2 1258.8,1082.7 1253,1090C1247.2,1097.3 1241.5,1101.5 1236,1104C1230.5,1106.5 1226,1107.3 1220,1105C1214,1102.7 1204.3,1095.7 1200,1090C1195.7,1084.3 1194.2,1079.3 1194,1071C1193.8,1062.7 1195.5,1050.2 1199,1040C1202.5,1029.8 1210.5,1018.3 1215,1010C1219.5,1001.7 1221.7,998.8 1226,990C1230.3,981.2 1236,968.3 1241,957C1246,945.7 1250.8,930.2 1256,922C1261.2,913.8 1266.5,911.3 1272,908C1277.5,904.7 1283.6,901.8 1288.8,902Z" fill="#bb7f4f" mask="url(#m_gmito2)"/></g>
<path d="M1300.3,871.4C1310,870.9 1322.4,875.9 1331,880.6C1339.7,885.4 1347.7,893 1352,900.1C1356.3,907.2 1357.2,912.5 1356.6,923.2C1356.1,934 1352.6,951.3 1348.5,964.4C1344.4,977.4 1338.6,987.9 1332.1,1001.6C1325.6,1015.3 1317.1,1032.9 1309.6,1046.6C1302.1,1060.4 1295.9,1072.3 1287.3,1083.9C1278.7,1095.5 1268.8,1107.5 1257.9,1116.3C1247,1125 1232.3,1133.6 1221.8,1136.6C1211.3,1139.5 1202.6,1137.5 1194.7,1133.8C1186.7,1130.2 1178.6,1123 1174.2,1114.6C1169.7,1106.3 1167.6,1095.7 1167.9,1083.7C1168.2,1071.7 1171.2,1057 1176,1042.8C1180.8,1028.5 1189.1,1013 1196.9,998.1C1204.6,983.1 1213.7,968 1222.4,953C1231.2,938 1241,919.6 1249.4,908C1257.7,896.4 1264,889.5 1272.5,883.4C1281,877.3 1290.5,871.9 1300.3,871.4Z" fill="none" stroke="#c3856a" stroke-width="9.2"/>
<path d="M869.8,1413.3C870.1,1406.5 871.5,1391.2 873.5,1383C875.6,1374.9 878.3,1369.3 882.1,1364.4C885.9,1359.4 890.7,1355.8 896,1353.2C901.4,1350.6 907,1348.7 914.2,1349C921.5,1349.3 931.4,1352.2 939.4,1355C947.5,1357.8 954.7,1362.1 962.4,1365.7C970.2,1369.4 978.1,1373.3 986,1376.7C993.9,1380.1 1003,1383.8 1009.7,1386.2C1016.4,1388.6 1020.7,1390.6 1026.4,1391.1C1032.1,1391.7 1037.5,1391.3 1043.8,1389.4C1050.2,1387.5 1058.1,1382.2 1064.3,1380C1070.5,1377.8 1075.4,1375.9 1081.2,1376.3C1087,1376.7 1093.4,1378.6 1099.3,1382.6C1105.3,1386.6 1111.6,1393.4 1117,1400.3C1122.5,1407.3 1128,1415.4 1132,1424.4C1136.1,1433.3 1140.3,1445.9 1141,1454.2C1141.8,1462.4 1139.3,1468.2 1136.8,1473.7C1134.2,1479.3 1131.3,1483.7 1125.8,1487.5C1120.3,1491.2 1111.2,1494.2 1103.8,1496.2C1096.4,1498.1 1091.7,1499.2 1081.6,1499.2C1071.4,1499.1 1054.7,1497.6 1043.1,1496.1C1031.6,1494.5 1023.9,1492.5 1012.2,1489.9C1000.6,1487.3 986.4,1484.2 973.4,1480.6C960.5,1477 946.2,1472.3 934.7,1468.2C923.1,1464.1 913,1461 904.2,1456C895.3,1451 887.1,1443.4 881.7,1438C876.3,1432.6 873.6,1427.8 871.7,1423.7C869.7,1419.5 869.4,1420.1 869.8,1413.3Z" fill="url(#gmito3)"/>
<mask id="m_gmito3" maskUnits="userSpaceOnUse" x="0" y="0" width="1920" height="1920"><rect x="0" y="0" width="1920" height="1920" fill="#fff"/>
<path d="M921.6,1370.5L920.8,1395.7A3,3 0 0 0 926.7,1396.2L930.6,1371.4A4.5,4.5 0 0 0 921.6,1370.5Z" fill="#000"/>
<path d="M942,1375L939.8,1423.7A3.5,3.5 0 0 0 946.8,1424.4L953.9,1376.2A6,6 0 0 0 942,1375Z" fill="#000"/>
<path d="M980.3,1401.3L985.9,1429.1A3.5,3.5 0 0 0 992.9,1428.4L992.2,1400A6,6 0 0 0 980.3,1401.3Z" fill="#000"/>
<path d="M1013.6,1403.8L1015.6,1420.9A3.5,3.5 0 0 0 1022.6,1420.9L1024.6,1403.8A5.5,5.5 0 0 0 1013.6,1403.8Z" fill="#000"/>
<path d="M1045.1,1397.1L1045.3,1433.2A3.5,3.5 0 0 0 1052.2,1433.7L1057.1,1397.9A6,6 0 0 0 1045.1,1397.1Z" fill="#000"/>
<path d="M1066.7,1404.2L1070.3,1422.8A3.5,3.5 0 0 0 1077.2,1422.2L1077.7,1403.3A5.5,5.5 0 0 0 1066.7,1404.2Z" fill="#000"/>
<path d="M915.6,1439.4L920.4,1417.1A3,3 0 0 0 914.6,1415.4L906.9,1436.9A4.5,4.5 0 0 0 915.6,1439.4Z" fill="#000"/>
<path d="M965.7,1469.8L966.3,1420.4A3.5,3.5 0 0 0 959.3,1419.9L953.7,1469A6,6 0 0 0 965.7,1469.8Z" fill="#000"/>
<path d="M1010.2,1481.1L1013.2,1437A3.5,3.5 0 0 0 1006.2,1436.1L998.3,1479.6A6,6 0 0 0 1010.2,1481.1Z" fill="#000"/>
<path d="M1040.7,1481.9L1038.2,1442.8A3.5,3.5 0 0 0 1031.2,1442.8L1028.7,1481.9A6,6 0 0 0 1040.7,1481.9Z" fill="#000"/>
<path d="M1068.8,1481.9L1066.3,1441.2A3.5,3.5 0 0 0 1059.3,1441.2L1056.8,1481.9A6,6 0 0 0 1068.8,1481.9Z" fill="#000"/>
<path d="M1096.9,1475.1L1091.3,1436.3A3.5,3.5 0 0 0 1084.3,1436.8L1085,1476.1A6,6 0 0 0 1096.9,1475.1Z" fill="#000"/>
</mask>
<g filter="url(#goo)"><path d="M901.9,1403.8C903.2,1395.2 906.6,1376.1 909.7,1370.9C912.8,1365.7 916.2,1371.5 920.6,1372.5C925.1,1373.5 930.3,1375.1 936.2,1377.2C942.2,1379.3 949.8,1382.4 956.6,1385C963.3,1387.6 970.4,1389.4 976.9,1392.8C983.4,1396.2 989.9,1402.7 995.6,1405.3C1001.4,1407.9 1006,1407.7 1011.2,1408.4C1016.5,1409.2 1019.3,1411 1026.9,1410C1034.4,1409 1050.1,1402.4 1056.6,1402.2C1063.1,1401.9 1062.6,1407.1 1065.9,1408.4C1069.3,1409.7 1071.4,1408.7 1076.9,1410C1082.3,1411.3 1093,1411 1098.8,1416.2C1104.5,1421.5 1110.7,1433.2 1111.2,1441.2C1111.8,1449.3 1105.5,1460.5 1101.9,1464.7C1098.2,1468.9 1093,1464.9 1089.4,1466.2C1085.7,1467.6 1085.7,1470.9 1080,1472.5C1074.3,1474.1 1065.2,1474.8 1055,1475.6C1044.8,1476.4 1026.9,1477.7 1019.1,1477.2C1011.2,1476.7 1012,1474.6 1008.1,1472.5C1004.2,1470.4 1000.8,1465.5 995.6,1464.7C990.4,1463.9 982.1,1468.9 976.9,1467.8C971.7,1466.8 969.1,1459.7 964.4,1458.4C959.7,1457.1 955.5,1461.8 948.8,1460C942,1458.2 928.4,1453.8 923.8,1447.5C919.1,1441.2 922.7,1425.1 920.6,1422.5C918.5,1419.9 914.4,1431.9 911.2,1431.9C908.1,1431.9 903.4,1427.2 901.9,1422.5C900.3,1417.8 900.6,1412.3 901.9,1403.8Z" fill="#bb7f4f" mask="url(#m_gmito3)"/></g>
<path d="M869.8,1413.3C870.1,1406.5 871.5,1391.2 873.5,1383C875.6,1374.9 878.3,1369.3 882.1,1364.4C885.9,1359.4 890.7,1355.8 896,1353.2C901.4,1350.6 907,1348.7 914.2,1349C921.5,1349.3 931.4,1352.2 939.4,1355C947.5,1357.8 954.7,1362.1 962.4,1365.7C970.2,1369.4 978.1,1373.3 986,1376.7C993.9,1380.1 1003,1383.8 1009.7,1386.2C1016.4,1388.6 1020.7,1390.6 1026.4,1391.1C1032.1,1391.7 1037.5,1391.3 1043.8,1389.4C1050.2,1387.5 1058.1,1382.2 1064.3,1380C1070.5,1377.8 1075.4,1375.9 1081.2,1376.3C1087,1376.7 1093.4,1378.6 1099.3,1382.6C1105.3,1386.6 1111.6,1393.4 1117,1400.3C1122.5,1407.3 1128,1415.4 1132,1424.4C1136.1,1433.3 1140.3,1445.9 1141,1454.2C1141.8,1462.4 1139.3,1468.2 1136.8,1473.7C1134.2,1479.3 1131.3,1483.7 1125.8,1487.5C1120.3,1491.2 1111.2,1494.2 1103.8,1496.2C1096.4,1498.1 1091.7,1499.2 1081.6,1499.2C1071.4,1499.1 1054.7,1497.6 1043.1,1496.1C1031.6,1494.5 1023.9,1492.5 1012.2,1489.9C1000.6,1487.3 986.4,1484.2 973.4,1480.6C960.5,1477 946.2,1472.3 934.7,1468.2C923.1,1464.1 913,1461 904.2,1456C895.3,1451 887.1,1443.4 881.7,1438C876.3,1432.6 873.6,1427.8 871.7,1423.7C869.7,1419.5 869.4,1420.1 869.8,1413.3Z" fill="none" stroke="#c3856a" stroke-width="9.2"/>
<path d="M1424.5,980L1425.3,981.2L1426.2,982.7L1427.3,984.2L1428.4,985.9L1429.7,987.7L1431,989.6L1432.3,991.6L1433.7,993.6L1435.1,995.7L1436.4,997.9L1437.8,1000L1439,1002.2L1440.1,1004.4L1441,1006.5L1441.8,1008.5L1442.5,1010.4L1443.2,1012.4L1443.8,1014.6L1444.4,1016.8L1444.9,1019L1445.5,1021.2L1445.9,1023.5L1446.4,1025.8L1446.8,1028.1L1447.1,1030.5L1447.4,1032.8L1447.6,1035L1447.8,1037.3L1447.9,1039.5L1448,1041.7L1448,1043.9L1447.9,1046L1447.8,1048.1L1447.6,1050.2L1447.4,1052.4L1447.1,1054.5L1446.7,1056.6L1446.4,1058.7L1445.8,1060.8L1445.2,1062.8L1444.6,1064.7L1443.8,1066.7L1443,1068.5L1442.2,1070.3L1441.3,1072.1L1440.4,1073.8L1439.4,1075.4L1438.4,1077L1437.3,1078.4L1436,1079.9L1434.7,1081.3L1433.3,1082.8L1431.8,1084.2L1430.2,1085.6L1428.5,1086.9L1426.8,1088.3L1425,1089.6L1423.2,1090.9L1421.4,1092.1L1419.5,1093.3L1417.7,1094.5L1415.9,1095.6L1413.9,1096.6L1412.1,1097.4L1410.4,1098.1L1408.6,1098.8L1406.7,1099.4L1404.7,1100L1402.6,1100.6L1400.5,1101.2L1398.4,1101.7L1396.2,1102.1L1394.2,1102.6L1392.2,1103L1390.2,1103.4L1388.4,1103.8L1386.7,1104.1L1385.1,1104.5L1383.5,1104.9L1382.3,1105.2A11.5,11.5 0 0 0 1390.3,1126.7L1391.2,1126.3L1392.2,1125.8L1393.5,1125.2L1395.1,1124.5L1396.8,1123.7L1398.7,1122.8L1400.7,1121.9L1402.8,1121L1405,1119.9L1407.2,1118.8L1409.4,1117.7L1411.7,1116.5L1413.9,1115.2L1416.1,1113.9L1418.3,1112.5L1420.3,1111L1422.1,1109.6L1423.9,1108.2L1425.9,1106.9L1427.8,1105.5L1429.8,1104.1L1431.8,1102.6L1433.8,1101.1L1435.7,1099.5L1437.7,1097.8L1439.6,1096.1L1441.4,1094.3L1443.2,1092.5L1445,1090.6L1446.6,1088.6L1448.1,1086.6L1449.6,1084.5L1450.9,1082.4L1452,1080.2L1453.1,1078L1454.1,1075.7L1455.1,1073.4L1455.9,1071.1L1456.7,1068.8L1457.4,1066.4L1458,1064L1458.6,1061.6L1459.2,1059.2L1459.8,1056.8L1460.2,1054.4L1460.7,1052L1461.1,1049.6L1461.4,1047.1L1461.6,1044.7L1461.8,1042.1L1461.9,1039.5L1462,1036.9L1462,1034.3L1461.9,1031.7L1461.8,1029L1461.6,1026.4L1461.3,1023.8L1461,1021.1L1460.7,1018.5L1460.3,1015.9L1459.8,1013.4L1459.3,1010.8L1458.8,1008.3L1458.2,1005.8L1457.5,1003.2L1456.6,1000.5L1455.6,997.9L1454.6,995.2L1453.6,992.5L1452.6,989.8L1451.5,987.2L1450.5,984.7L1449.4,982.3L1448.4,979.9L1447.5,977.8L1446.6,975.8L1445.8,974L1445.1,972.4L1444.6,971.1L1444.2,970.1A11,11 0 0 0 1424.5,980Z" fill="#386c97"/>
<path d="M1470,933.5L1470.3,935.5L1470.6,937.8L1471.1,940.4L1471.5,943.3L1472,946.4L1472.6,949.7L1473.1,953.1L1473.7,956.7L1474.3,960.4L1474.8,964.2L1475.3,968.1L1475.8,971.9L1476.3,975.8L1476.7,979.5L1477,983.2L1477.2,986.8L1477.4,990.5L1477.6,994.3L1477.8,998.2L1477.9,1002.1L1478,1006.2L1478.1,1010.2L1478.2,1014.3L1478.2,1018.4L1478.1,1022.5L1478,1026.5L1477.8,1030.5L1477.6,1034.5L1477.4,1038.4L1477,1042.2L1476.7,1045.9L1476.2,1049.5L1475.7,1053.1L1475.1,1056.6L1474.5,1060.1L1473.8,1063.5L1473.1,1067L1472.3,1070.3L1471.5,1073.7L1470.6,1077L1469.6,1080.2L1468.4,1083.3L1467.1,1086.4L1465.7,1089.5L1464.3,1092.5L1462.9,1095.4L1461.5,1098.3L1460,1101.1L1458.5,1103.9L1456.9,1106.6L1455.2,1109.2L1453.5,1111.9L1451.7,1114.4L1449.9,1117L1448,1119.5L1446.1,1122L1444.1,1124.5L1442.2,1126.9L1440.2,1129.3L1438.2,1131.7L1436.2,1134.1L1434.1,1136.4L1431.9,1138.7L1429.9,1140.9L1427.8,1143L1425.6,1145.2L1423.4,1147.4L1421,1149.6L1418.6,1151.8L1416.2,1154L1413.8,1156.2L1411.4,1158.3L1409.1,1160.4L1406.8,1162.4L1404.7,1164.2L1402.6,1166L1400.8,1167.6L1399.1,1169.1L1397.5,1170.5L1396.3,1171.6A14,14 0 0 0 1416.9,1190.6L1417.8,1189.4L1418.9,1187.9L1420.3,1186.2L1421.8,1184.3L1423.4,1182.2L1425.2,1179.9L1427.2,1177.5L1429.1,1175L1431.2,1172.4L1433.3,1169.7L1435.4,1166.9L1437.5,1164.1L1439.5,1161.3L1441.5,1158.5L1443.4,1155.7L1445.2,1153L1446.9,1150.3L1448.6,1147.7L1450.3,1145.1L1452.2,1142.5L1454,1139.8L1455.9,1137.1L1457.7,1134.3L1459.6,1131.5L1461.4,1128.7L1463.2,1125.8L1464.9,1122.8L1466.6,1119.8L1468.3,1116.8L1469.8,1113.7L1471.4,1110.5L1472.8,1107.3L1474.1,1104.1L1475.4,1100.9L1476.6,1097.6L1477.8,1094.3L1479,1090.9L1480,1087.5L1481.1,1084.1L1482.3,1080.7L1483.5,1077.3L1484.7,1073.9L1485.8,1070.4L1486.9,1066.8L1487.9,1063.2L1488.9,1059.6L1489.8,1055.9L1490.7,1052.1L1491.5,1048.3L1492.3,1044.3L1493,1040.3L1493.6,1036.2L1494.2,1032L1494.8,1027.8L1495.3,1023.6L1495.7,1019.4L1496.1,1015.1L1496.5,1010.9L1496.9,1006.7L1497.2,1002.6L1497.5,998.5L1497.8,994.5L1498,990.6L1498.2,986.7L1498.4,982.8L1498.5,978.7L1498.5,974.6L1498.5,970.5L1498.4,966.3L1498.3,962.3L1498.2,958.3L1498,954.4L1497.8,950.6L1497.7,947L1497.5,943.6L1497.3,940.5L1497.2,937.6L1497.1,935.1L1497,933L1496.9,931.1A13.5,13.5 0 0 0 1470,933.5Z" fill="#386c97"/>
<path d="M1513.2,929.2L1513.2,930.9L1513.2,932.9L1513.3,935.2L1513.4,937.6L1513.5,940.1L1513.5,942.9L1513.6,945.8L1513.7,948.8L1513.8,951.9L1513.8,955.1L1513.8,958.3L1513.8,961.6L1513.7,964.8L1513.6,968L1513.4,971.2L1513.2,974.3L1512.8,977.5L1512.5,980.8L1512,984.3L1511.6,987.9L1511.1,991.7L1510.5,995.4L1510,999.3L1509.4,1003.1L1508.7,1007L1508.1,1010.8L1507.5,1014.6L1506.8,1018.3L1506.1,1021.9L1505.5,1025.4L1504.8,1028.8L1504.2,1032L1503.6,1035.2L1502.9,1038.3L1502.2,1041.5L1501.4,1044.6L1500.6,1047.8L1499.8,1050.8L1499,1053.8L1498.1,1056.8L1497.3,1059.6L1496.6,1062.2L1495.8,1064.8L1495.1,1067.1L1494.5,1069.3L1493.9,1071.2L1493.5,1073L1493,1074.5A2.8,2.8 0 0 0 1498.2,1076.3L1498.8,1074.9L1499.6,1073.3L1500.4,1071.5L1501.4,1069.4L1502.4,1067.2L1503.5,1064.8L1504.7,1062.3L1505.9,1059.6L1507.2,1056.8L1508.5,1053.9L1509.7,1050.9L1511.1,1047.9L1512.4,1044.8L1513.7,1041.7L1514.9,1038.6L1516.1,1035.5L1517.3,1032.3L1518.5,1029L1519.7,1025.6L1521,1022.1L1522.3,1018.5L1523.6,1014.8L1524.9,1011L1526.2,1007.3L1527.4,1003.5L1528.7,999.7L1529.9,995.9L1531,992.2L1532.1,988.5L1533.1,984.9L1534.1,981.3L1534.9,977.9L1535.7,974.5L1536.4,970.9L1537.1,967.4L1537.7,963.9L1538.3,960.4L1538.8,956.9L1539.3,953.5L1539.7,950.3L1540.1,947.1L1540.5,944.1L1540.8,941.3L1541.1,938.8L1541.4,936.4L1541.7,934.4L1541.9,932.6L1542.1,931.2A14.5,14.5 0 0 0 1513.2,929.2Z" fill="#386c97"/>
<path d="M1580.6,929.1L1579.4,931.1L1577.9,933.6L1576.2,936.4L1574.3,939.6L1572.1,943.1L1569.8,946.9L1567.4,950.8L1564.9,955L1562.3,959.4L1559.7,963.8L1557.1,968.4L1554.5,972.9L1552,977.5L1549.6,982.1L1547.2,986.7L1545,991.1L1543,995.4L1540.9,999.8L1538.9,1004.2L1536.9,1008.7L1534.9,1013.3L1532.9,1017.9L1530.9,1022.5L1528.9,1027.1L1526.9,1031.8L1524.9,1036.5L1523,1041.2L1521.2,1045.9L1519.4,1050.6L1517.6,1055.4L1515.9,1060.1L1514.3,1064.8L1512.7,1069.5L1511.2,1074.2L1509.6,1079L1508.1,1083.9L1506.6,1088.8L1505.1,1093.7L1503.7,1098.6L1502.4,1103.5L1500.9,1108.4L1499.5,1113.3L1498.2,1118.1L1496.9,1122.9L1495.8,1127.6L1494.8,1132.3L1493.9,1137L1493.2,1141.5L1492.6,1146.1L1492.2,1150.5L1491.9,1154.9L1491.7,1159.2L1491.6,1163.5L1491.7,1167.6L1491.8,1171.8L1492,1175.9L1492.3,1179.9L1492.7,1183.8L1493.1,1187.8L1493.6,1191.6L1494.1,1195.4L1494.6,1199.2L1495,1203L1495.5,1206.8L1496.2,1210.8L1496.9,1215L1497.8,1219.2L1498.8,1223.5L1499.9,1227.7L1501,1231.9L1502.1,1236L1503.2,1240L1504.4,1243.8L1505.5,1247.5L1506.5,1251L1507.5,1254.2L1508.4,1257.1L1509.2,1259.6L1509.8,1261.8L1510.3,1263.6A14.5,14.5 0 0 0 1537.8,1254.5L1537,1252.5L1536.1,1250.1L1535,1247.5L1533.8,1244.7L1532.5,1241.6L1531.2,1238.3L1529.7,1234.9L1528.3,1231.4L1526.8,1227.7L1525.4,1224L1524,1220.3L1522.6,1216.5L1521.4,1212.8L1520.2,1209.2L1519.2,1205.8L1518.4,1202.4L1517.5,1198.9L1516.7,1195.3L1515.9,1191.8L1515.2,1188.2L1514.5,1184.7L1513.9,1181.1L1513.4,1177.5L1512.9,1173.9L1512.5,1170.3L1512.2,1166.6L1511.9,1162.9L1511.7,1159.2L1511.7,1155.4L1511.7,1151.6L1511.9,1147.7L1512.2,1143.8L1512.6,1139.7L1513.1,1135.5L1513.8,1131.2L1514.6,1126.7L1515.5,1122.2L1516.4,1117.6L1517.5,1112.9L1518.8,1108.2L1520.2,1103.5L1521.7,1098.8L1523.3,1094.1L1524.9,1089.5L1526.6,1084.8L1528.3,1080.1L1529.9,1075.6L1531.6,1071L1533.4,1066.6L1535.1,1062.1L1537,1057.6L1538.9,1053.1L1540.8,1048.7L1542.8,1044.2L1544.9,1039.7L1546.9,1035.3L1549,1030.9L1551.3,1026.5L1553.5,1022.3L1555.8,1018L1558.1,1013.8L1560.4,1009.7L1562.7,1005.6L1565,1001.7L1567.3,997.8L1569.8,993.7L1572.4,989.6L1575.1,985.5L1577.9,981.3L1580.8,977.1L1583.6,973L1586.4,969L1589.2,965.1L1591.9,961.4L1594.4,957.8L1596.8,954.5L1599,951.5L1601,948.7L1602.7,946.2L1604.2,944.1A14,14 0 0 0 1580.6,929.1Z" fill="#386c97"/>
<path d="M1485.1,1099.3L1484.6,1100.8L1484,1102.7L1483.3,1104.8L1482.5,1107.2L1481.7,1109.8L1480.9,1112.5L1480,1115.4L1479,1118.4L1478,1121.5L1476.9,1124.7L1475.9,1127.9L1474.8,1131L1473.7,1134.2L1472.6,1137.2L1471.4,1140.1L1470.2,1142.9L1469.1,1145.7L1467.8,1148.5L1466.5,1151.4L1465.2,1154.3L1463.8,1157.2L1462.4,1160.1L1461,1163.1L1459.5,1166L1458.1,1168.9L1456.6,1171.8L1455.2,1174.6L1453.8,1177.4L1452.4,1180.1L1451,1182.8L1449.7,1185.3L1448.4,1187.7L1447.1,1190L1445.8,1192.4L1444.5,1194.7L1443.1,1197L1441.8,1199.3L1440.4,1201.5L1439.1,1203.7L1437.8,1205.8L1436.5,1207.9L1435.3,1209.8L1434.2,1211.6L1433.1,1213.4L1432.1,1215L1431.2,1216.4L1430.4,1217.8L1429.7,1218.9A13.5,13.5 0 0 0 1453.9,1230.8L1454.4,1229.7L1454.9,1228.4L1455.5,1226.8L1456.2,1225.1L1457,1223.2L1457.8,1221.2L1458.7,1219L1459.6,1216.7L1460.5,1214.3L1461.5,1211.8L1462.5,1209.2L1463.5,1206.6L1464.5,1203.9L1465.4,1201.2L1466.4,1198.5L1467.3,1195.8L1468.2,1193.1L1469.1,1190.3L1470,1187.5L1471,1184.5L1471.9,1181.4L1472.9,1178.3L1473.9,1175.2L1474.8,1172L1475.8,1168.8L1476.7,1165.6L1477.6,1162.4L1478.5,1159.1L1479.4,1156L1480.2,1152.8L1481,1149.7L1481.7,1146.6L1482.4,1143.5L1483.1,1140.3L1483.8,1137L1484.5,1133.7L1485.2,1130.3L1485.8,1127L1486.4,1123.7L1487,1120.4L1487.5,1117.3L1488.1,1114.3L1488.5,1111.4L1489,1108.7L1489.4,1106.3L1489.8,1104.1L1490.1,1102.2L1490.4,1100.6A2.8,2.8 0 0 0 1485.1,1099.3Z" fill="#386c97"/>
<path d="M1634.8,954.7L1633.3,956.1L1631.5,957.9L1629.4,959.9L1627,962.1L1624.4,964.6L1621.6,967.2L1618.6,970L1615.5,973L1612.3,976.1L1609,979.3L1605.7,982.5L1602.5,985.9L1599.2,989.2L1596,992.6L1593,996L1590.1,999.4L1587.3,1002.7L1584.5,1006.1L1581.6,1009.5L1578.7,1013.1L1575.8,1016.7L1572.9,1020.4L1570,1024.2L1567.1,1028L1564.3,1031.8L1561.5,1035.7L1558.8,1039.6L1556.1,1043.4L1553.6,1047.3L1551.1,1051.2L1548.8,1055.1L1546.6,1058.9L1544.6,1062.6L1542.6,1066.3L1540.6,1070.1L1538.8,1073.8L1537,1077.6L1535.2,1081.3L1533.5,1085.1L1531.9,1088.9L1530.4,1092.7L1529,1096.5L1527.7,1100.3L1526.5,1104.2L1525.4,1108.1L1524.4,1112L1523.6,1115.9L1522.9,1119.9L1522.4,1123.9L1522,1127.9L1521.8,1131.9L1521.7,1135.8L1521.7,1139.8L1521.9,1143.8L1522.1,1147.7L1522.5,1151.6L1522.9,1155.5L1523.5,1159.4L1524.1,1163.2L1524.8,1167L1525.6,1170.7L1526.4,1174.4L1527.2,1178L1528.1,1181.6L1529.2,1185.5L1530.6,1189.5L1532,1193.4L1533.6,1197.4L1535.3,1201.4L1537.1,1205.3L1538.9,1209.1L1540.8,1212.8L1542.6,1216.4L1544.3,1219.8L1546,1223.1L1547.5,1226L1548.9,1228.7L1550.2,1231.1L1551.1,1233.1L1551.9,1234.7A10.5,10.5 0 0 0 1570.9,1225.7L1569.9,1223.8L1568.8,1221.5L1567.4,1219L1566,1216.3L1564.4,1213.3L1562.7,1210.2L1561,1206.9L1559.2,1203.5L1557.5,1200L1555.7,1196.5L1554.1,1193L1552.5,1189.4L1551,1185.9L1549.7,1182.6L1548.6,1179.4L1547.7,1176.3L1546.8,1173.1L1546,1169.8L1545.2,1166.4L1544.5,1163L1543.8,1159.6L1543.2,1156.2L1542.7,1152.8L1542.3,1149.4L1541.9,1146L1541.6,1142.6L1541.5,1139.2L1541.4,1135.9L1541.4,1132.5L1541.6,1129.2L1541.8,1126L1542.2,1122.7L1542.8,1119.5L1543.4,1116.2L1544.2,1112.9L1545,1109.6L1546,1106.2L1547.1,1102.9L1548.3,1099.5L1549.7,1096.1L1551.1,1092.6L1552.6,1089.2L1554.1,1085.7L1555.9,1082.3L1557.6,1078.8L1559.5,1075.4L1561.4,1071.9L1563.4,1068.4L1565.4,1065L1567.6,1061.5L1569.9,1057.9L1572.3,1054.4L1574.8,1050.8L1577.4,1047.1L1580.1,1043.5L1582.8,1039.9L1585.6,1036.3L1588.5,1032.7L1591.3,1029.2L1594.2,1025.7L1597,1022.3L1599.8,1019L1602.6,1015.7L1605.3,1012.6L1608.1,1009.6L1610.9,1006.5L1613.9,1003.3L1617,1000.2L1620.2,997.1L1623.4,994L1626.5,991L1629.7,988L1632.8,985.1L1635.7,982.4L1638.5,979.8L1641.2,977.4L1643.6,975.2L1645.8,973.1L1647.8,971.3L1649.4,969.8A10.5,10.5 0 0 0 1634.8,954.7Z" fill="#386c97"/>
<path d="M1638.1,1002.9L1636.7,1004.2L1635,1005.7L1633,1007.5L1630.7,1009.5L1628.2,1011.7L1625.6,1014.1L1622.7,1016.6L1619.8,1019.2L1616.8,1022L1613.8,1024.8L1610.7,1027.6L1607.7,1030.5L1604.8,1033.4L1601.9,1036.4L1599.2,1039.3L1596.7,1042.1L1594.3,1044.8L1592,1047.5L1589.7,1050.3L1587.4,1053.2L1585,1056.1L1582.8,1059L1580.5,1061.9L1578.3,1064.9L1576.1,1068L1574.1,1071L1572,1074.1L1570.1,1077.2L1568.3,1080.3L1566.5,1083.3L1564.9,1086.5L1563.3,1089.6L1562,1092.6L1560.7,1095.7L1559.6,1098.8L1558.5,1101.9L1557.6,1105L1556.8,1108L1556,1111.1L1555.4,1114.2L1554.9,1117.3L1554.4,1120.4L1554.1,1123.4L1553.8,1126.5L1553.6,1129.6L1553.5,1132.6L1553.5,1135.7L1553.5,1138.8L1553.7,1142.2L1554.1,1145.8L1554.7,1149.3L1555.4,1152.9L1556.2,1156.4L1557.1,1159.9L1558.1,1163.3L1559,1166.7L1560,1169.9L1561,1173L1562,1175.8L1562.8,1178.5L1563.6,1180.9L1564.3,1183L1564.8,1184.7L1565.2,1186.1A10.5,10.5 0 0 0 1585.4,1180.3L1584.9,1178.6L1584.2,1176.5L1583.4,1174.3L1582.6,1171.8L1581.6,1169.2L1580.7,1166.4L1579.7,1163.5L1578.7,1160.5L1577.7,1157.5L1576.8,1154.4L1576,1151.4L1575.2,1148.4L1574.6,1145.5L1574.1,1142.8L1573.8,1140.3L1573.6,1137.9L1573.5,1135.5L1573.5,1132.9L1573.5,1130.4L1573.6,1127.8L1573.8,1125.3L1574,1122.8L1574.3,1120.2L1574.7,1117.7L1575.2,1115.2L1575.8,1112.7L1576.4,1110.2L1577.1,1107.6L1577.9,1105.1L1578.8,1102.6L1579.7,1100L1580.8,1097.5L1582,1095L1583.3,1092.4L1584.7,1089.8L1586.3,1087.2L1588.1,1084.5L1589.9,1081.8L1591.8,1079.1L1593.8,1076.4L1595.9,1073.7L1598.1,1071L1600.3,1068.3L1602.5,1065.7L1604.7,1063L1607,1060.4L1609.3,1057.8L1611.5,1055.3L1613.8,1052.9L1616.3,1050.4L1618.9,1047.8L1621.7,1045.1L1624.6,1042.4L1627.5,1039.8L1630.5,1037.1L1633.4,1034.6L1636.3,1032.1L1639.1,1029.6L1641.8,1027.4L1644.3,1025.2L1646.7,1023.2L1648.8,1021.4L1650.6,1019.8L1652.2,1018.5A10.5,10.5 0 0 0 1638.1,1002.9Z" fill="#386c97"/>
<circle cx="1563.5" cy="901.4" r="12.4" fill="#386c97"/>
<circle cx="1383.1" cy="1010.3" r="17" fill="#386c97"/>
<circle cx="1399.1" cy="1072.2" r="11" fill="#386c97"/>
<circle cx="1369.2" cy="1198.2" r="17" fill="#386c97"/>
<circle cx="1635.1" cy="1064.7" r="14.5" fill="#386c97"/>
<circle cx="1625.5" cy="1104.2" r="14.5" fill="#386c97"/>
<circle cx="1579.6" cy="1116" r="12.4" fill="#386c97"/>
<circle cx="1616.9" cy="1143.7" r="12.4" fill="#386c97"/>
<circle cx="1669.2" cy="1142.6" r="14.5" fill="#386c97"/>
<path d="M399.8,434.9L407.9,443.5L416.1,452.1L424.3,460.6L432.6,469L440.9,477.5L449.2,485.9L457.5,494.3L465.8,502.8L474.1,511.2L482.4,519.6L490.7,528L499,536.5L507.3,544.9L515.6,553.4L523.8,561.8L532.1,570.3L540.4,578.7L548.7,587.2L557,595.6L565.3,604L573.6,612.5L581.9,620.9L590.2,629.3L598.5,637.8L606.7,646.2L615,654.6L623.3,663.1L631.6,671.5L639.9,679.9L648.2,688.4L656.5,696.8L664.8,705.2L673.1,713.7L681.4,722.1L689.7,730.5L698.1,738.9L706.4,747.4L714.7,755.8L723,764.2L731.4,772.5L739.8,780.8L748.3,789.1L756.7,797.4L765.1,805.7L773.6,814L782.1,822.2L790.6,830.4L799.1,838.7L807.6,846.9L816.1,855.1L824.7,863.3L833.2,871.5L841.8,879.6L850.4,887.7L859,895.8L867.6,903.9L876.3,912.1L885,920.1L893.7,928.1L902.4,936.1L902.6,935.9L894.6,927.2L886.6,918.5L878.5,909.8L870.4,901.2L862.3,892.6L854.2,883.9L846.1,875.3L837.9,866.8L829.7,858.2L821.5,849.7L813.3,841.2L805,832.7L796.8,824.2L788.6,815.7L780.3,807.2L772,798.8L763.7,790.4L755.4,781.9L747.1,773.5L738.8,765.1L730.5,756.7L722,748.4L713.6,740.1L705.2,731.8L696.8,723.5L688.3,715.2L679.9,706.9L671.5,698.6L663,690.3L654.6,682L646.1,673.7L637.7,665.5L629.2,657.2L620.8,648.9L612.4,640.6L603.9,632.3L595.5,624L587,615.7L578.6,607.4L570.1,599.2L561.7,590.9L553.2,582.6L544.8,574.3L536.3,566.1L527.9,557.8L519.4,549.5L510.9,541.3L502.5,533L494.1,524.7L485.6,516.4L477.2,508.1L468.7,499.8L460.3,491.5L451.9,483.2L443.4,474.9L435,466.6L426.5,458.3L418,450.2L409.4,442L400.8,433.9Z" fill="#888" fill-opacity="0.45"/>
<path d="M1678.1,408.7L1669.5,416.8L1661,425L1652.4,433.1L1644,441.4L1635.6,449.7L1627.2,457.9L1618.8,466.2L1610.4,474.5L1601.9,482.8L1593.5,491.1L1585.1,499.3L1576.7,507.6L1568.3,515.9L1559.9,524.1L1551.4,532.4L1543,540.7L1534.5,548.9L1526.1,557.2L1517.7,565.4L1509.3,573.7L1500.8,582L1492.4,590.2L1484,598.5L1475.6,606.8L1467.2,615.1L1458.8,623.3L1450.3,631.6L1441.9,639.9L1433.5,648.2L1425.1,656.4L1416.7,664.7L1408.2,673L1399.8,681.2L1391.4,689.5L1383,697.8L1374.6,706.1L1366.2,714.4L1357.8,722.7L1349.4,731L1341.1,739.4L1332.8,747.8L1324.5,756.2L1316.3,764.6L1308,773L1299.7,781.4L1291.5,789.9L1283.3,798.4L1275,806.9L1266.8,815.3L1258.7,823.8L1250.5,832.4L1242.3,840.9L1234.2,849.4L1226.1,858L1218,866.6L1209.9,875.2L1201.8,883.8L1193.8,892.5L1185.8,901.2L1177.8,909.9L1178,910.1L1186.7,902.1L1195.4,894.1L1204.1,886.1L1212.7,878L1221.3,869.9L1229.9,861.8L1238.5,853.7L1247,845.6L1255.5,837.4L1264,829.2L1272.6,821L1281,812.8L1289.5,804.6L1298,796.4L1306.5,788.2L1314.9,779.9L1323.3,771.6L1331.7,763.3L1340.1,755L1348.5,746.8L1356.9,738.5L1365.2,730.1L1373.5,721.7L1381.8,713.3L1390,704.8L1398.3,696.4L1406.6,688L1414.9,679.6L1423.2,671.2L1431.4,662.8L1439.7,654.4L1448,645.9L1456.2,637.5L1464.5,629.1L1472.8,620.7L1481.1,612.3L1489.3,603.8L1497.6,595.4L1505.9,587L1514.1,578.6L1522.4,570.1L1530.7,561.7L1538.9,553.3L1547.2,544.8L1555.4,536.4L1563.7,528L1571.9,519.5L1580.2,511.1L1588.5,502.7L1596.8,494.3L1605,485.9L1613.3,477.5L1621.6,469L1629.9,460.6L1638.1,452.2L1646.4,443.8L1654.7,435.4L1662.8,426.8L1671,418.3L1679.1,409.7Z" fill="#888" fill-opacity="0.45"/>
<path d="M400.7,1587L409.3,1578.9L417.9,1570.7L426.4,1562.5L434.9,1554.2L443.3,1545.9L451.8,1537.6L460.2,1529.3L468.7,1521L477.1,1512.7L485.5,1504.5L494,1496.2L502.4,1487.9L510.9,1479.6L519.3,1471.3L527.8,1463L536.2,1454.7L544.7,1446.5L553.2,1438.2L561.6,1429.9L570.1,1421.6L578.5,1413.3L587,1405L595.4,1396.7L603.9,1388.4L612.3,1380.1L620.7,1371.8L629.2,1363.6L637.6,1355.3L646.1,1347L654.5,1338.7L663,1330.4L671.4,1322.1L679.9,1313.8L688.3,1305.5L696.7,1297.2L705.1,1288.9L713.6,1280.6L722,1272.3L730.4,1263.9L738.8,1255.5L747.1,1247.1L755.4,1238.7L763.7,1230.2L772,1221.8L780.3,1213.4L788.6,1204.9L796.8,1196.4L805,1187.9L813.3,1179.4L821.5,1170.9L829.7,1162.3L837.9,1153.8L846,1145.2L854.2,1136.6L862.3,1128L870.4,1119.4L878.5,1110.7L886.6,1102L894.6,1093.3L902.6,1084.6L902.4,1084.4L893.7,1092.4L885,1100.4L876.3,1108.5L867.6,1116.6L859,1124.7L850.4,1132.8L841.8,1140.9L833.2,1149.1L824.6,1157.3L816.1,1165.5L807.6,1173.7L799.1,1181.9L790.5,1190.1L782,1198.4L773.5,1206.6L765.1,1214.9L756.7,1223.2L748.2,1231.5L739.8,1239.8L731.4,1248.1L722.9,1256.5L714.6,1264.9L706.3,1273.3L698,1281.7L689.7,1290.2L681.4,1298.6L673.1,1307L664.8,1315.4L656.5,1323.9L648.2,1332.3L639.9,1340.8L631.6,1349.2L623.3,1357.6L615,1366.1L606.7,1374.5L598.4,1383L590.1,1391.4L581.8,1399.8L573.5,1408.3L565.2,1416.7L556.9,1425.2L548.6,1433.6L540.3,1442.1L532.1,1450.5L523.8,1459L515.5,1467.5L507.2,1475.9L498.9,1484.3L490.6,1492.8L482.3,1501.2L474,1509.7L465.7,1518.1L457.4,1526.5L449.1,1535L440.8,1543.4L432.5,1551.8L424.2,1560.3L416,1568.8L407.8,1577.4L399.7,1586Z" fill="#888" fill-opacity="0.45"/>
<path d="M1679.1,1610.5L1671,1601.9L1662.8,1593.4L1654.7,1584.8L1646.4,1576.4L1638.1,1568L1629.9,1559.6L1621.6,1551.1L1613.3,1542.7L1605,1534.3L1596.8,1525.9L1588.5,1517.5L1580.2,1509L1571.9,1500.6L1563.7,1492.2L1555.4,1483.7L1547.2,1475.3L1538.9,1466.9L1530.7,1458.4L1522.4,1450L1514.1,1441.6L1505.9,1433.1L1497.6,1424.7L1489.3,1416.3L1481.1,1407.9L1472.8,1399.4L1464.5,1391L1456.2,1382.6L1448,1374.2L1439.7,1365.8L1431.4,1357.3L1423.2,1348.9L1414.9,1340.5L1406.6,1332.1L1398.3,1323.6L1390,1315.2L1381.8,1306.8L1373.5,1298.4L1365.2,1290L1356.9,1281.6L1348.5,1273.3L1340.1,1265L1331.7,1256.7L1323.3,1248.4L1314.9,1240.1L1306.5,1231.9L1298,1223.6L1289.5,1215.4L1281,1207.2L1272.6,1199L1264,1190.8L1255.5,1182.6L1247,1174.5L1238.5,1166.3L1229.9,1158.2L1221.3,1150.1L1212.7,1142L1204.1,1133.9L1195.4,1125.9L1186.7,1117.9L1178,1109.9L1177.8,1110.1L1185.8,1118.8L1193.8,1127.5L1201.8,1136.2L1209.9,1144.8L1218,1153.4L1226.1,1162L1234.2,1170.6L1242.3,1179.1L1250.5,1187.7L1258.7,1196.2L1266.8,1204.7L1275,1213.2L1283.3,1221.7L1291.5,1230.2L1299.7,1238.6L1308,1247.1L1316.3,1255.5L1324.5,1263.9L1332.8,1272.3L1341.1,1280.7L1349.4,1289.1L1357.8,1297.4L1366.2,1305.7L1374.6,1314L1383,1322.3L1391.4,1330.6L1399.8,1338.8L1408.2,1347.1L1416.7,1355.4L1425.1,1363.7L1433.5,1371.9L1441.9,1380.2L1450.3,1388.5L1458.8,1396.8L1467.2,1405.1L1475.6,1413.3L1484,1421.6L1492.4,1429.9L1500.8,1438.2L1509.3,1446.4L1517.7,1454.7L1526.1,1463L1534.5,1471.2L1543,1479.5L1551.4,1487.8L1559.9,1496L1568.3,1504.3L1576.7,1512.6L1585.1,1520.8L1593.5,1529.1L1601.9,1537.4L1610.4,1545.7L1618.8,1554L1627.2,1562.2L1635.6,1570.5L1644,1578.8L1652.4,1587.1L1661,1595.2L1669.5,1603.4L1678.1,1611.5Z" fill="#888" fill-opacity="0.45"/>
</svg>
</body></html>
